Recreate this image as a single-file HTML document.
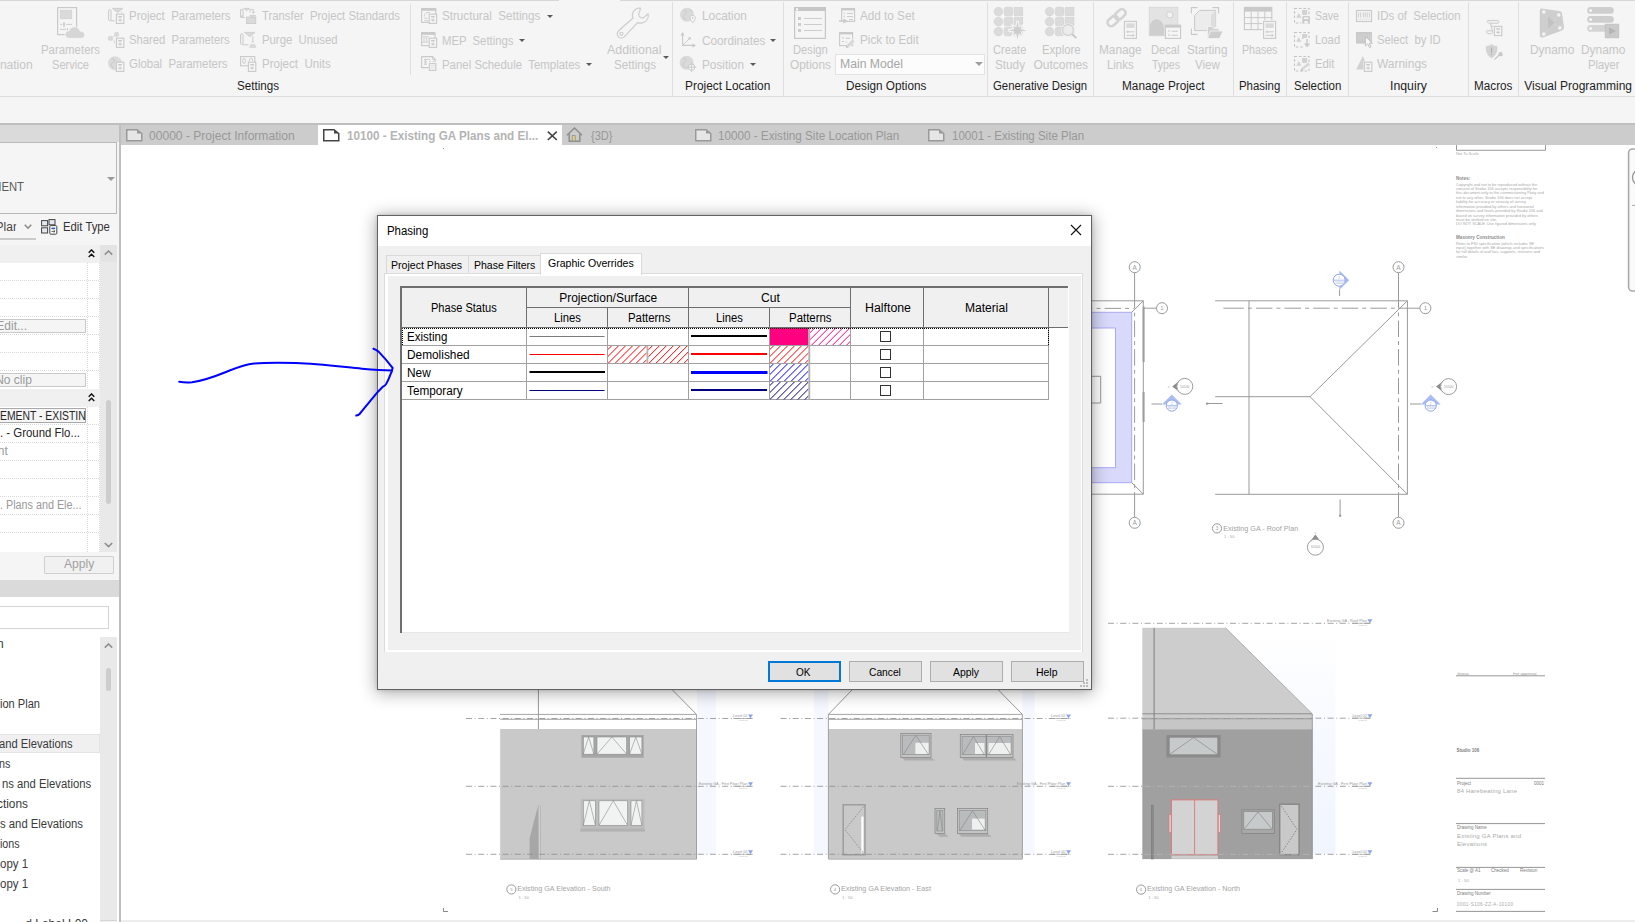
<!DOCTYPE html>
<html lang="en"><head><meta charset="utf-8"><title>Phasing</title>
<style>
html,body{margin:0;padding:0;}
body{width:1635px;height:922px;overflow:hidden;position:relative;background:#fff;
font-family:"Liberation Sans",sans-serif;}
#r{position:absolute;left:0;top:0;width:1635px;height:922px;overflow:hidden;}
#r div,#r span.t,#r svg{position:absolute;}
span.t{white-space:pre;line-height:1;display:block;}
</style></head>
<body><div id="r">
<div style="left:0px;top:0px;width:1635px;height:123px;background:#f5f5f5;"></div>
<div style="left:0px;top:0px;width:559px;height:1px;background:#d8d8d8;"></div>
<div style="left:620px;top:0px;width:1015px;height:1px;background:#d8d8d8;"></div>
<div style="left:0px;top:96px;width:1635px;height:1px;background:#dcdcdc;"></div>
<div style="left:0px;top:123px;width:1635px;height:2px;background:#bfbfbf;"></div>
<div style="left:672px;top:2px;width:1px;height:94px;background:#dfdfdf;"></div>
<div style="left:783px;top:2px;width:1px;height:94px;background:#dfdfdf;"></div>
<div style="left:987px;top:2px;width:1px;height:94px;background:#dfdfdf;"></div>
<div style="left:1093px;top:2px;width:1px;height:94px;background:#dfdfdf;"></div>
<div style="left:1233px;top:2px;width:1px;height:94px;background:#dfdfdf;"></div>
<div style="left:1286px;top:2px;width:1px;height:94px;background:#dfdfdf;"></div>
<div style="left:1348px;top:2px;width:1px;height:94px;background:#dfdfdf;"></div>
<div style="left:1468px;top:2px;width:1px;height:94px;background:#dfdfdf;"></div>
<div style="left:1518px;top:2px;width:1px;height:94px;background:#dfdfdf;"></div>
<div style="left:410px;top:4px;width:1px;height:71px;background:#dfdfdf;"></div>
<div style="left:121px;top:125px;width:1514px;height:20px;background:#cccccc;"></div>
<div style="left:318px;top:125px;width:244px;height:20px;background:#ffffff;"></div>
<div style="left:835px;top:53.5px;width:150px;height:21px;background:#fcfcfc;border:1px solid #e3e3e3;box-sizing:border-box;"></div>
<svg style="left:546.5px;top:14.7px" width="6" height="3" viewBox="0 0 6 3"><path d="M0 0H6L3.0 3Z" fill="#5a5a5a"/></svg>
<svg style="left:519.4px;top:38.7px" width="6" height="3" viewBox="0 0 6 3"><path d="M0 0H6L3.0 3Z" fill="#5a5a5a"/></svg>
<svg style="left:586.4px;top:62.7px" width="6" height="3" viewBox="0 0 6 3"><path d="M0 0H6L3.0 3Z" fill="#5a5a5a"/></svg>
<svg style="left:663.4px;top:55.8px" width="6" height="3" viewBox="0 0 6 3"><path d="M0 0H6L3.0 3Z" fill="#5a5a5a"/></svg>
<svg style="left:770.4px;top:38.7px" width="6" height="3" viewBox="0 0 6 3"><path d="M0 0H6L3.0 3Z" fill="#5a5a5a"/></svg>
<svg style="left:749.7px;top:62.7px" width="6" height="3" viewBox="0 0 6 3"><path d="M0 0H6L3.0 3Z" fill="#5a5a5a"/></svg>
<svg style="left:974.7px;top:62.0px" width="8" height="4" viewBox="0 0 8 4"><path d="M0 0H8L4.0 4Z" fill="#a0a0a0"/></svg>
<svg style="left:126px;top:129.3px" width="17" height="13" viewBox="0 0 17 13"><path d="M0.75 0.75H11L15.75 4.5V11.75H0.75Z" fill="#e6e6e6" stroke="#999" stroke-width="1.5"/><path d="M11 0.75V4.5H15.75Z" fill="#999"/></svg>
<svg style="left:322.5px;top:129.3px" width="17" height="13" viewBox="0 0 17 13"><path d="M0.75 0.75H11L15.75 4.5V11.75H0.75Z" fill="#fff" stroke="#444" stroke-width="1.5"/><path d="M11 0.75V4.5H15.75Z" fill="#444"/></svg>
<svg style="left:694.5px;top:129.3px" width="17" height="13" viewBox="0 0 17 13"><path d="M0.75 0.75H11L15.75 4.5V11.75H0.75Z" fill="#e6e6e6" stroke="#999" stroke-width="1.5"/><path d="M11 0.75V4.5H15.75Z" fill="#999"/></svg>
<svg style="left:927.5px;top:129.3px" width="17" height="13" viewBox="0 0 17 13"><path d="M0.75 0.75H11L15.75 4.5V11.75H0.75Z" fill="#e6e6e6" stroke="#999" stroke-width="1.5"/><path d="M11 0.75V4.5H15.75Z" fill="#999"/></svg>
<svg style="left:547px;top:131px" width="11" height="10" viewBox="0 0 11 10"><path d="M0.8 0.6L9.8 9M9.8 0.6L0.8 9" stroke="#444" stroke-width="1.6" fill="none"/></svg>
<svg style="left:566px;top:127px" width="17" height="15" viewBox="0 0 17 15"><path d="M1 8.2L8.5 1L16 8.2" fill="none" stroke="#8e8e8e" stroke-width="1.5"/><path d="M3.2 7V14.2H13.8V7" fill="none" stroke="#8e8e8e" stroke-width="1.5"/><rect x="6.2" y="8.6" width="3" height="5.4" fill="#e7d27a" stroke="#8e8e8e" stroke-width="0.8"/></svg>
<div style="left:0px;top:125px;width:119px;height:455px;background:#f5f5f5;"></div>
<div style="left:119px;top:125px;width:2px;height:797px;background:#bfbfbf;"></div>
<div style="left:0px;top:125px;width:119px;height:16.5px;background:#dadada;"></div>
<div style="left:-2px;top:142px;width:119px;height:72px;background:#f5f5f5;border:1px solid #b9b9b9;box-sizing:border-box;"></div>
<svg style="left:107.0px;top:177.0px" width="8" height="4" viewBox="0 0 8 4"><path d="M0 0H8L4.0 4Z" fill="#9a9a9a"/></svg>
<svg style="left:24px;top:223.5px" width="8" height="6" viewBox="0 0 8 6"><path d="M0.8 0.8L4 4.2L7.2 0.8" fill="none" stroke="#8a8a8a" stroke-width="1.6"/></svg>
<div style="left:0px;top:238px;width:36px;height:2px;background:#cbcbcb;"></div>
<svg style="left:41px;top:219px" width="17" height="16" viewBox="0 0 17 16"><rect x="0.6" y="1.6" width="6" height="5.2" fill="#e4e8f0" stroke="#444" stroke-width="1"/><rect x="8" y="0.6" width="6" height="5.2" fill="#e4e8f0" stroke="#444" stroke-width="1"/><rect x="0.6" y="8.8" width="6" height="5.2" fill="#e4e8f0" stroke="#444" stroke-width="1"/><rect x="8.8" y="6.6" width="7" height="8.6" rx="1" fill="#fff" stroke="#444" stroke-width="1"/><rect x="10.4" y="8.6" width="3.8" height="1.6" fill="#2a62c0"/><path d="M10.4 12.4H14M12.6 11.2L14 12.4L12.6 13.6" stroke="#444" stroke-width="0.8" fill="none"/></svg>
<div style="left:0px;top:245px;width:100px;height:307px;background:#ffffff;"></div>
<div style="left:0px;top:245px;width:100px;height:17.5px;background:#f0f0f0;"></div>
<div style="left:0px;top:388.5px;width:100px;height:18px;background:#f0f0f0;"></div>
<div style="left:0px;top:280px;width:100px;height:1px;background:none;background:repeating-linear-gradient(90deg,#d9d9d9 0 1px,transparent 1px 2px);"></div>
<div style="left:0px;top:298px;width:100px;height:1px;background:none;background:repeating-linear-gradient(90deg,#d9d9d9 0 1px,transparent 1px 2px);"></div>
<div style="left:0px;top:316px;width:100px;height:1px;background:none;background:repeating-linear-gradient(90deg,#d9d9d9 0 1px,transparent 1px 2px);"></div>
<div style="left:0px;top:334px;width:100px;height:1px;background:none;background:repeating-linear-gradient(90deg,#d9d9d9 0 1px,transparent 1px 2px);"></div>
<div style="left:0px;top:352px;width:100px;height:1px;background:none;background:repeating-linear-gradient(90deg,#d9d9d9 0 1px,transparent 1px 2px);"></div>
<div style="left:0px;top:370px;width:100px;height:1px;background:none;background:repeating-linear-gradient(90deg,#d9d9d9 0 1px,transparent 1px 2px);"></div>
<div style="left:0px;top:424px;width:100px;height:1px;background:none;background:repeating-linear-gradient(90deg,#d9d9d9 0 1px,transparent 1px 2px);"></div>
<div style="left:0px;top:442px;width:100px;height:1px;background:none;background:repeating-linear-gradient(90deg,#d9d9d9 0 1px,transparent 1px 2px);"></div>
<div style="left:0px;top:460px;width:100px;height:1px;background:none;background:repeating-linear-gradient(90deg,#d9d9d9 0 1px,transparent 1px 2px);"></div>
<div style="left:0px;top:478px;width:100px;height:1px;background:none;background:repeating-linear-gradient(90deg,#d9d9d9 0 1px,transparent 1px 2px);"></div>
<div style="left:0px;top:496px;width:100px;height:1px;background:none;background:repeating-linear-gradient(90deg,#d9d9d9 0 1px,transparent 1px 2px);"></div>
<div style="left:0px;top:514px;width:100px;height:1px;background:none;background:repeating-linear-gradient(90deg,#d9d9d9 0 1px,transparent 1px 2px);"></div>
<div style="left:0px;top:532px;width:100px;height:1px;background:none;background:repeating-linear-gradient(90deg,#d9d9d9 0 1px,transparent 1px 2px);"></div>
<div style="left:87px;top:263px;width:1px;height:125px;background:none;background:repeating-linear-gradient(180deg,#d9d9d9 0 1px,transparent 1px 2px);"></div>
<div style="left:87px;top:407px;width:1px;height:145px;background:none;background:repeating-linear-gradient(180deg,#d9d9d9 0 1px,transparent 1px 2px);"></div>
<div style="left:99px;top:263px;width:1px;height:125px;background:none;background:repeating-linear-gradient(180deg,#d9d9d9 0 1px,transparent 1px 2px);"></div>
<div style="left:99px;top:407px;width:1px;height:145px;background:none;background:repeating-linear-gradient(180deg,#d9d9d9 0 1px,transparent 1px 2px);"></div>
<svg style="left:87.5px;top:249px" width="7" height="9" viewBox="0 0 7 9"><path d="M0.7 3.7L3.5 0.9L6.3 3.7M0.7 8L3.5 5.2L6.3 8" fill="none" stroke="#111" stroke-width="1.4"/></svg>
<svg style="left:87.5px;top:393px" width="7" height="9" viewBox="0 0 7 9"><path d="M0.7 3.7L3.5 0.9L6.3 3.7M0.7 8L3.5 5.2L6.3 8" fill="none" stroke="#111" stroke-width="1.4"/></svg>
<div style="left:-2px;top:318.5px;width:88px;height:14px;background:#f5f5f5;border:1px solid #c9c9c9;box-sizing:border-box;"></div>
<div style="left:-2px;top:372.5px;width:88px;height:14px;background:#f5f5f5;border:1px solid #c9c9c9;box-sizing:border-box;"></div>
<div style="left:-2px;top:408px;width:88px;height:15px;background:#f5f5f5;border:1px solid #a9a9a9;box-sizing:border-box;"></div>
<div style="left:100px;top:245px;width:17px;height:307px;background:#e9e9e9;"></div>
<div style="left:100px;top:245px;width:17px;height:16.5px;background:#e3e3e3;"></div>
<svg style="left:104px;top:250px" width="9" height="6" viewBox="0 0 9 6"><path d="M0.8 4.6L4.5 1L8.2 4.6" fill="none" stroke="#8e8e8e" stroke-width="1.5"/></svg>
<svg style="left:104px;top:542px" width="9" height="6" viewBox="0 0 9 6"><path d="M0.8 1L4.5 4.6L8.2 1" fill="none" stroke="#8c8c8c" stroke-width="1.5"/></svg>
<div style="left:106px;top:399.5px;width:5px;height:104px;background:#cdcdcd;border-radius:2.5px;"></div>
<div style="left:44px;top:555.5px;width:70px;height:18px;background:#f1f1f1;border:1px solid #cfcfcf;box-sizing:border-box;border-radius:1px;"></div>
<div style="left:0px;top:580px;width:119px;height:16.5px;background:#dadada;"></div>
<div style="left:0px;top:596.5px;width:119px;height:325.5px;background:#ffffff;"></div>
<div style="left:-2px;top:605.5px;width:111px;height:23px;background:#fff;border:1px solid #d4d4d4;box-sizing:border-box;"></div>
<div style="left:100px;top:637px;width:17px;height:282.5px;background:#e9e9e9;"></div>
<svg style="left:104px;top:642.5px" width="9" height="6" viewBox="0 0 9 6"><path d="M0.8 4.6L4.5 1L8.2 4.6" fill="none" stroke="#8c8c8c" stroke-width="1.5"/></svg>
<div style="left:106px;top:667.5px;width:5px;height:23px;background:#cdcdcd;border-radius:2.5px;"></div>
<div style="left:-2px;top:733.5px;width:102px;height:19.5px;background:#f0f0f0;border:1px solid #e4e4e4;box-sizing:border-box;"></div>
<div style="left:121px;top:919.5px;width:1514px;height:3px;background:#ededed;"></div>
<div style="left:100px;top:919.5px;width:17px;height:1px;background:#d6d6d6;"></div>
<div style="left:100px;top:920.5px;width:17px;height:2px;background:#f0f0f0;"></div>
<!-- ribbon icons -->
<svg style="left:0;top:0" width="1635" height="96" viewBox="0 0 1635 96" fill="none" stroke="#c9c9c9" stroke-width="1"><rect x="57.6" y="7.6" width="19" height="27" fill="none" stroke="#c9c9c9" stroke-width="1.2"/><rect x="60.2" y="10.2" width="11.6" height="8.6" fill="#dadada" stroke="#cfcfcf" stroke-width="0.6"/><path d="M60 24.4H62.2M66 24.4H72M60 29.4H66" stroke="#c9c9c9" stroke-width="0.9"/><rect x="63.2" y="22.2" width="1.6" height="4.6" fill="#c9c9c9" stroke="none"/><path d="M67.4 28V30.4" stroke="#c9c9c9" stroke-width="1"/><path d="M69.6 38.4C66.6 38.4 65 36.6 65 34.6C65 32.4 66.8 30.8 69 30.8C69.6 28.4 71.8 26.8 74.4 26.8C77.2 26.8 79.4 28.6 80 31C82.8 31 84.8 32.6 84.8 34.8C84.8 36.8 83.2 38.4 80.6 38.4Z" fill="#d6d6d6" stroke="#f5f5f5" stroke-width="1"/><path d="M108.6 10.4C108.6 9.4 111 9.4 111 10.4V19.6C111 21 108.6 21 108.6 19.6ZM111 20.8H114.6" stroke="#c9c9c9"/><path d="M112.4 8.4H122.8L117.6 12.6ZM121.6 11.6V12.8" fill="#dadada" stroke="#c9c9c9" stroke-width="0.8"/><rect x="116.4" y="14.2" width="7.4" height="9.2" fill="#f5f5f5" stroke="#c9c9c9" stroke-width="1.1"/><rect x="118.30000000000001" y="16.0" width="3.6000000000000005" height="1.5" fill="#c9c9c9" stroke="none"/><path d="M118.2 20.1H122.00000000000001M120.10000000000001 18.5V21.7" stroke="#c9c9c9" stroke-width="1"/><circle cx="110.4" cy="38.4" r="2.2" fill="#dadada" stroke="#d0d0d0" stroke-width="0.6"/><circle cx="116.6" cy="34.4" r="2.2" fill="#dadada" stroke="#d0d0d0" stroke-width="0.6"/><path d="M112.2 37.4L114.8 35.6M112.4 39.6C114 40.4 114.6 41.4 114.6 43.4" stroke="#d2d2d2" stroke-width="0.9"/><rect x="116.4" y="38.2" width="7.4" height="9.2" fill="#f5f5f5" stroke="#c9c9c9" stroke-width="1.1"/><rect x="118.30000000000001" y="40.0" width="3.6000000000000005" height="1.5" fill="#c9c9c9" stroke="none"/><path d="M118.2 44.1H122.00000000000001M120.10000000000001 42.5V45.7" stroke="#c9c9c9" stroke-width="1"/><circle cx="115" cy="63.2" r="7" fill="#dcdcdc" stroke="none"/><path d="M111.4 59.6C113 58.4 115 59 114.4 61C113.6 63 111.6 62.4 111 64.6C111.4 66.6 113 66.4 113.6 68.6" stroke="#cdcdcd" stroke-width="1.2"/><rect x="116.4" y="62.2" width="7.4" height="9.2" fill="#f5f5f5" stroke="#c9c9c9" stroke-width="1.1"/><rect x="118.30000000000001" y="64.0" width="3.6000000000000005" height="1.5" fill="#c9c9c9" stroke="none"/><path d="M118.2 68.10000000000001H122.00000000000001M120.10000000000001 66.5V69.7" stroke="#c9c9c9" stroke-width="1"/><path d="M240.6 9.6H243V16.2H240.6ZM240.6 16.2V17.4H245" stroke="#c9c9c9"/><path d="M243.6 8.4H249.6L246.6 10.8Z" fill="#dadada" stroke="#c9c9c9" stroke-width="0.7"/><path d="M250 9.6H253.4V13M251.8 11.6L253.4 13.4L255 11.6M250 9.6V12.4" stroke="#c9c9c9" stroke-width="0.9"/><rect x="246.6" y="17" width="9.2" height="6.6" fill="#dadada" stroke="#c9c9c9" stroke-width="0.8"/><path d="M249.8 15.4H255.6L252.7 18Z" fill="#dadada" stroke="#c9c9c9" stroke-width="0.7"/><path d="M240.6 34.6C240.6 33.4 243 33.4 243 34.6V43.4C243 44.8 240.6 44.8 240.6 43.4ZM243 44.8H248.6" stroke="#c9c9c9"/><path d="M244.6 32.4H255L249.8 36.8Z" fill="#dadada" stroke="#c9c9c9" stroke-width="0.8"/><path d="M252.8 36V41.6M251.6 41.8H254" stroke="#c9c9c9" stroke-width="0.9"/><path d="M250.8 44.4H254.8L255.8 47.4H249.6Z" fill="#dadada" stroke="#d0d0d0" stroke-width="0.6"/><rect x="240.6" y="56.6" width="14.2" height="9.2" fill="none" stroke="#c9c9c9" stroke-width="1.1"/><rect x="242.8" y="58.6" width="2.6" height="4.8" rx="1.2" fill="none" stroke="#c9c9c9" stroke-width="0.9"/><path d="M249.4 61.4V59.8C249.4 58 252.6 58 252.6 59.8V61.4" stroke="#c9c9c9" stroke-width="0.9"/><rect x="248.4" y="62.2" width="7.4" height="9.2" fill="#f5f5f5" stroke="#c9c9c9" stroke-width="1.1"/><rect x="250.3" y="64.0" width="3.6000000000000005" height="1.5" fill="#c9c9c9" stroke="none"/><path d="M250.20000000000002 68.10000000000001H254.0M252.1 66.5V69.7" stroke="#c9c9c9" stroke-width="1"/><rect x="421.6" y="8.6" width="14.2" height="13.8" fill="none" stroke="#c9c9c9" stroke-width="1.1"/><rect x="421.6" y="8.6" width="14.2" height="2.2" fill="#c9c9c9" stroke="none"/><path d="M430 12.6H426.6L424.4 15V16.4M424.2 18.2H427.6M424.4 20.6H428" stroke="#c9c9c9" stroke-width="0.9"/><rect x="429.2" y="14.2" width="7.4" height="9.2" fill="#f5f5f5" stroke="#c9c9c9" stroke-width="1.1"/><rect x="431.09999999999997" y="16.0" width="3.6000000000000005" height="1.5" fill="#c9c9c9" stroke="none"/><path d="M431.0 20.1H434.79999999999995M432.9 18.5V21.7" stroke="#c9c9c9" stroke-width="1"/><rect x="421.6" y="32.6" width="13.4" height="13" fill="none" stroke="#c9c9c9" stroke-width="1.1"/><rect x="421.6" y="32.6" width="13.4" height="2.2" fill="#c9c9c9" stroke="none"/><path d="M422 36.8H428.6M422 42.2H428.6M424 37.4V41.6M426.6 37.4V41.6" stroke="#c9c9c9" stroke-width="0.9"/><rect x="429.2" y="38.2" width="7.4" height="9.2" fill="#f5f5f5" stroke="#c9c9c9" stroke-width="1.1"/><rect x="431.09999999999997" y="40.0" width="3.6000000000000005" height="1.5" fill="#c9c9c9" stroke="none"/><path d="M431.0 44.1H434.79999999999995M432.9 42.5V45.7" stroke="#c9c9c9" stroke-width="1"/><path d="M421.6 56.6H432.6L435.2 59.2V62M421.6 56.6V67.6H428.6" stroke="#c9c9c9" stroke-width="1.1"/><path d="M432.4 56.8V59.4H435" stroke="#c9c9c9" stroke-width="0.8"/><path d="M424 59.4H430M424 61.8H427M424 64.2H427M425.4 59.6V64.4M429 61.8L431 60.8M432.6 61.8L434.4 60.8" stroke="#c9c9c9" stroke-width="0.9"/><rect x="429.4" y="63.6" width="6.4" height="6.8" fill="#f5f5f5" stroke="#c9c9c9" stroke-width="1.1"/><path d="M431.4 65.8H432.4M433.4 65.8H434.2M431.4 68H432.4M433.4 68H434.2" stroke="#c9c9c9" stroke-width="1"/><path d="M640.6 8.2C637.4 7.6 633.4 9.6 632.6 13.4C632.2 15 632.4 16.6 633 18L618.6 30.8C616.8 32.6 616.8 35.2 618.4 36.8C620 38.4 622.6 38.4 624.2 36.8L637.6 22.6C639.2 23.2 641.2 23.2 643 22.6C646.8 21.4 648.8 17.8 648.2 13.8L643.6 17.6C641.8 18.4 639.4 17.2 638.8 15.4C638.4 14 638.6 13 639.4 12.2Z" stroke="#cdcdcd" stroke-width="1.2" stroke-linejoin="round"/><circle cx="621.4" cy="33.8" r="1.6" stroke="#cdcdcd" stroke-width="1.1"/><circle cx="687" cy="14.8" r="7" fill="#dadada" stroke="none"/><path d="M683.4 11.2C685 10 687 10.6 686.4 12.6C685.6 14.6 683.6 14 683 16.2C683.4 18.2 685 18 685.6 20.2M689.4 9.4C690.6 10.4 691.6 10.6 692.6 12" stroke="#cfcfcf" stroke-width="1.2"/><path d="M692.8 22.8C690.6 20.2 690.2 19 690.2 17.8C690.2 16.2 691.4 15.2 692.8 15.2C694.2 15.2 695.4 16.2 695.4 17.8C695.4 19 695 20.2 692.8 22.8Z" fill="#f5f5f5" stroke="#c9c9c9" stroke-width="0.9"/><circle cx="692.8" cy="17.8" r="0.9" fill="#c9c9c9" stroke="none"/><path d="M682.6 34V45.4H694" stroke="#c9c9c9" stroke-width="1.1"/><path d="M682.6 32L684.6 35.6H680.6ZM696 45.4L692.4 43.4V47.4Z" fill="#c9c9c9" stroke="none"/><path d="M683 45L689.8 38.2" stroke="#c9c9c9" stroke-width="0.9"/><path d="M691 37L690.2 40.2L687.8 37.8Z" fill="#c9c9c9" stroke="none"/><circle cx="686.6" cy="62.8" r="7" fill="#dadada" stroke="none"/><path d="M683 59.2C684.6 58 686.6 58.6 686 60.6C685.2 62.6 683.2 62 682.6 64.2C683 66.2 684.6 66 685.2 68.2" stroke="#cfcfcf" stroke-width="1.2"/><circle cx="691.6" cy="67.2" r="3.2" fill="#f5f5f5" stroke="#c9c9c9" stroke-width="1"/><path d="M691.6 62.4V72M686.8 67.2H696.4" stroke="#c9c9c9" stroke-width="0.9"/><rect x="794.6" y="7.6" width="30.8" height="30.8" fill="none" stroke="#c6c6c6" stroke-width="1.2"/><rect x="794.6" y="7.6" width="30.8" height="3.4" fill="#c6c6c6" stroke="none"/><rect x="796" y="8.4" width="2" height="2" fill="#fff" stroke="none"/><rect x="798" y="17" width="3" height="3" fill="#cdcdcd" stroke="none"/><path d="M804 18.5H822" stroke="#cdcdcd" stroke-width="1"/><rect x="798" y="23" width="3" height="3" fill="#cdcdcd" stroke="none"/><path d="M804 24.5H822" stroke="#cdcdcd" stroke-width="1"/><rect x="798" y="29" width="3" height="3" fill="#cdcdcd" stroke="none"/><path d="M804 30.5H822" stroke="#cdcdcd" stroke-width="1"/><rect x="841.6" y="8.6" width="13" height="12.8" fill="#f5f5f5" stroke="#c9c9c9" stroke-width="1.1"/><rect x="841.6" y="8.6" width="13" height="1.8" fill="#c9c9c9" stroke="none"/><path d="M843.4 13H845M847 13.4H853M843.4 16.2H845M847 16.6H853M849 19.6H853" stroke="#c9c9c9" stroke-width="1"/><path d="M839 21H844.4" stroke="#cdcdcd" stroke-width="1.6"/><path d="M843.4 18.2L847.8 21L843.4 23.8Z" fill="#cdcdcd" stroke="none"/><rect x="839.6" y="32.6" width="13" height="13" fill="none" stroke="#c9c9c9" stroke-width="1.1"/><rect x="839.6" y="32.6" width="13" height="1.8" fill="#c9c9c9" stroke="none"/><path d="M842 37.8H844M845.6 38.2H850M842 41.6H844M845.6 42H847" stroke="#c9c9c9" stroke-width="1"/><path d="M852.6 39L855 41.4L848.8 47.4L846.4 45Z" fill="#d6d6d6" stroke="#f5f5f5" stroke-width="0.8"/><path d="M846.4 45L846 48L848.8 47.4Z" fill="#c4c4c4" stroke="none"/><circle cx="998.4" cy="11.600000000000001" r="4.3" fill="#dbdbdb" stroke="#d2d2d2" stroke-width="0.6"/><rect x="1004.2" y="7.2" width="8.6" height="8.6" rx="1.8" fill="#dbdbdb" stroke="#d2d2d2" stroke-width="0.6"/><rect x="1014.2" y="7.2" width="8.6" height="8.6" fill="#dbdbdb" stroke="#d2d2d2" stroke-width="0.6"/><circle cx="998.4" cy="21.6" r="4.3" fill="#dbdbdb" stroke="#d2d2d2" stroke-width="0.6"/><rect x="1004.2" y="17.2" width="8.6" height="8.6" rx="1.8" fill="#dbdbdb" stroke="#d2d2d2" stroke-width="0.6"/><rect x="1014.2" y="17.2" width="8.6" height="8.6" fill="#dbdbdb" stroke="#d2d2d2" stroke-width="0.6"/><circle cx="998.4" cy="31.6" r="4.3" fill="#dbdbdb" stroke="#d2d2d2" stroke-width="0.6"/><rect x="1004.2" y="27.2" width="8.6" height="8.6" rx="1.8" fill="#dbdbdb" stroke="#d2d2d2" stroke-width="0.6"/><rect x="1014.2" y="27.2" width="8.6" height="8.6" fill="#dbdbdb" stroke="#d2d2d2" stroke-width="0.6"/><path d="M1017.5 21.0L1018.7 27.4L1022.0 25.9L1020.5 29.2L1026.9 30.4L1020.5 31.6L1022.0 34.9L1018.7 33.4L1017.5 39.8L1016.3 33.4L1013.0 34.9L1014.5 31.6L1008.1 30.4L1014.5 29.2L1013.0 25.9L1016.3 27.4Z" fill="#cdcdcd" stroke="#f5f5f5" stroke-width="2.2" paint-order="stroke"/><circle cx="1049.6000000000001" cy="11.600000000000001" r="4.3" fill="#dbdbdb" stroke="#d2d2d2" stroke-width="0.6"/><rect x="1055.4" y="7.2" width="8.6" height="8.6" rx="1.8" fill="#dbdbdb" stroke="#d2d2d2" stroke-width="0.6"/><rect x="1065.4" y="7.2" width="8.6" height="8.6" fill="#dbdbdb" stroke="#d2d2d2" stroke-width="0.6"/><circle cx="1049.6000000000001" cy="21.6" r="4.3" fill="#dbdbdb" stroke="#d2d2d2" stroke-width="0.6"/><rect x="1055.4" y="17.2" width="8.6" height="8.6" rx="1.8" fill="#dbdbdb" stroke="#d2d2d2" stroke-width="0.6"/><rect x="1065.4" y="17.2" width="8.6" height="8.6" fill="#dbdbdb" stroke="#d2d2d2" stroke-width="0.6"/><circle cx="1049.6000000000001" cy="31.6" r="4.3" fill="#dbdbdb" stroke="#d2d2d2" stroke-width="0.6"/><rect x="1055.4" y="27.2" width="8.6" height="8.6" rx="1.8" fill="#dbdbdb" stroke="#d2d2d2" stroke-width="0.6"/><rect x="1065.4" y="27.2" width="8.6" height="8.6" fill="#dbdbdb" stroke="#d2d2d2" stroke-width="0.6"/><circle cx="1068" cy="30" r="6.6" fill="#f5f5f5" stroke="none"/><circle cx="1068" cy="30" r="5.4" fill="#ececec" stroke="#cdcdcd" stroke-width="1.1"/><path d="M1072.2 34.2L1076.4 38.2" stroke="#c6c6c6" stroke-width="1.8"/><g transform="rotate(-42 1116.7 17.6)" stroke="#d3d3d3" stroke-width="2.5" fill="none"><rect x="1105.6" y="13.9" width="12" height="7.4" rx="3.7"/><rect x="1115.4" y="13.9" width="12" height="7.4" rx="3.7"/></g><rect x="1123.2" y="20.2" width="14.4" height="19.4" fill="#f5f5f5" stroke="none"/><rect x="1124.4" y="21.4" width="12" height="17" fill="#f5f5f5" stroke="#c9c9c9" stroke-width="1.1"/><rect x="1126.3000000000002" y="23.299999999999997" width="8.2" height="4.6" fill="#dadada" stroke="none"/><path d="M1126.4 31.799999999999997H1134.4M1127.8000000000002 30.4V33.2M1126.4 35.4H1134.4M1133.0 34.0V36.8" stroke="#c9c9c9" stroke-width="0.9"/><rect x="1149.2" y="7.2" width="28.6" height="28.6" fill="#e3e3e3" stroke="#d6d6d6" stroke-width="0.8"/><path d="M1149.6 35.4V26C1151 21.4 1153.6 19.2 1156.6 19.2C1160.4 19.2 1163.2 23 1164 28V35.4Z" fill="#cecece" stroke="none"/><circle cx="1169.8" cy="14.8" r="3.2" fill="#f2f2f2" stroke="#d0d0d0" stroke-width="1"/><rect x="1165.4" y="25.2" width="15.2" height="13.2" fill="#f5f5f5" stroke="#c9c9c9" stroke-width="1.1"/><rect x="1165.4" y="25.2" width="15.2" height="2.4" fill="#c9c9c9" stroke="none"/><path d="M1168 31H1170M1171.6 31.2H1178M1168 35H1170M1171.6 35.2H1178" stroke="#c9c9c9" stroke-width="1.1"/><path d="M1191.4 13.4V7.6H1197.6M1212.4 7.6H1218.6V13.4M1191.4 28.6V34.4H1197.6" stroke="#c9c9c9" stroke-width="1.1"/><path d="M1194.6 15.4L1199.6 10.4H1215.6V26L1211 30.6H1194.6Z" fill="#ececec" stroke="#c9c9c9" stroke-width="1"/><path d="M1211 15L1215.6 10.4V26L1211 30.6Z" fill="#dedede" stroke="none"/><path d="M1207.4 38.4V26.4H1212.4L1213.6 28.4H1219V30.4" fill="#d2d2d2" stroke="#f5f5f5" stroke-width="0.8"/><path d="M1207.4 38.6L1210.6 31H1223L1219.6 38.6Z" fill="#cdcdcd" stroke="#f5f5f5" stroke-width="0.8"/><rect x="1244.4" y="7.4" width="27.4" height="22.2" fill="none" stroke="#c9c9c9" stroke-width="1.1"/><rect x="1244.4" y="7.4" width="27.4" height="4.2" fill="#c9c9c9" stroke="none"/><path d="M1244.4 17.6H1271.8M1244.4 23.6H1271.8M1251.2 11.6V29.6M1258 11.6V29.6M1264.8 11.6V29.6" stroke="#c9c9c9" stroke-width="1"/><rect x="1262.4" y="20.2" width="14.4" height="19.4" fill="#f5f5f5" stroke="none"/><rect x="1263.6" y="21.4" width="12" height="17" fill="#f5f5f5" stroke="#c9c9c9" stroke-width="1.1"/><rect x="1265.5" y="23.299999999999997" width="8.2" height="4.6" fill="#dadada" stroke="none"/><path d="M1265.6 31.799999999999997H1273.6M1267.0 30.4V33.2M1265.6 35.4H1273.6M1272.1999999999998 34.0V36.8" stroke="#c9c9c9" stroke-width="0.9"/><rect x="1294.5" y="8.5" width="14.5" height="14.5" fill="none" stroke="#c4c4c4" stroke-width="1.1" stroke-dasharray="2.6 1.8"/><path d="M1296.6 17.6L1298.8 13.6L1301 17.6Z" fill="#d2d2d2" stroke="#d0d0d0" stroke-width="0.5"/><rect x="1302.4" y="10.4" width="4.4" height="4.2" fill="#d2d2d2" stroke="#cacaca" stroke-width="0.6"/><rect x="1301.4" y="15.2" width="9.4" height="9.4" fill="#f5f5f5" stroke="none"/><rect x="1302.4" y="16.2" width="7.4" height="7.4" fill="#c8c8c8" stroke="none"/><rect x="1303.8" y="17.4" width="4.6" height="1.8" fill="#f5f5f5" stroke="none"/><rect x="1304.4" y="21" width="3.4" height="2.6" fill="#f5f5f5" stroke="none"/><rect x="1294.5" y="32.5" width="14.5" height="14.5" fill="none" stroke="#c4c4c4" stroke-width="1.1" stroke-dasharray="2.6 1.8"/><path d="M1296.6 41.6L1298.8 37.6L1301 41.6Z" fill="#d2d2d2" stroke="#d0d0d0" stroke-width="0.5"/><rect x="1302.4" y="34.4" width="4.4" height="4.2" fill="#d2d2d2" stroke="#cacaca" stroke-width="0.6"/><rect x="1303.6" y="38" width="6" height="10" fill="#f5f5f5" stroke="none"/><path d="M1307 39V45.6" stroke="#c8c8c8" stroke-width="1.4"/><path d="M1304 43.6L1307 47.4L1310 43.6Z" fill="#c8c8c8" stroke="none"/><rect x="1294.5" y="56.5" width="14.5" height="14.5" fill="none" stroke="#c4c4c4" stroke-width="1.1" stroke-dasharray="2.6 1.8"/><path d="M1296.6 65.6L1298.8 61.6L1301 65.6Z" fill="#d2d2d2" stroke="#d0d0d0" stroke-width="0.5"/><rect x="1302.4" y="58.4" width="4.4" height="4.2" fill="#d2d2d2" stroke="#cacaca" stroke-width="0.6"/><path d="M1301 68L1308.4 62L1310.4 64.4L1303 70.4Z" fill="#d6d6d6" stroke="#f5f5f5" stroke-width="0.9"/><path d="M1301 68L1300.8 71.6L1303.6 70.4Z" fill="#c4c4c4" stroke="none"/><rect x="1356.5" y="10.5" width="15" height="11" fill="none" stroke="#c9c9c9" stroke-width="1.1"/><path d="M1358.6 12.4V17.4M1360.6 12.4V17.4M1363.4 12.4V17.4M1365.2 12.4V17.4M1367.2 12.4V17.4M1369.4 12.4V17.4" stroke="#c9c9c9" stroke-width="0.9"/><path d="M1358.4 19.2H1370" stroke="#c9c9c9" stroke-width="0.9" stroke-dasharray="1 1"/><rect x="1356" y="32" width="16" height="11.6" fill="#cacaca" stroke="none"/><path d="M1358.6 34V41M1361 34V41M1363.6 34V41M1366 34V41M1368.4 34V41M1370.4 34V41" stroke="#d6d6d6" stroke-width="0.8"/><path d="M1365.4 36.6V46L1367.8 43.8L1369.6 47.6L1371 46.9L1369.3 43.2H1372.4Z" fill="#f8f8f8" stroke="#bdbdbd" stroke-width="0.9" stroke-linejoin="round"/><path d="M1362.8 56L1368.8 69.4H1356.2Z" fill="#d2d2d2" stroke="none"/><rect x="1363.4" y="61" width="9.4" height="11.4" fill="#f5f5f5" stroke="none"/><rect x="1364.4" y="62.2" width="7.4" height="9.2" fill="#f5f5f5" stroke="#c9c9c9" stroke-width="1.1"/><rect x="1366.3000000000002" y="64.0" width="3.6000000000000005" height="1.5" fill="#c9c9c9" stroke="none"/><path d="M1366.2 68.10000000000001H1370.0000000000002M1368.1000000000001 66.5V69.7" stroke="#c9c9c9" stroke-width="1"/><path d="M1487.6 20.6H1497.8C1499.2 20.6 1499.2 23.2 1497.8 23.2H1490.4L1492.8 32.4C1493 34.2 1488 34.2 1486.6 32.6C1486 31.6 1486.4 30.8 1487.2 30.8H1492.4M1490.4 23.2C1488.8 23.2 1486.4 22.6 1487.6 20.6M1491 26H1493.4" stroke="#c9c9c9" stroke-width="1"/><rect x="1494.4" y="26.4" width="7.4" height="9.2" fill="#f5f5f5" stroke="#c9c9c9" stroke-width="1.1"/><rect x="1496.3000000000002" y="28.2" width="3.6000000000000005" height="1.5" fill="#c9c9c9" stroke="none"/><path d="M1496.2 32.3H1500.0000000000002M1498.1000000000001 30.7V33.9" stroke="#c9c9c9" stroke-width="1"/><path d="M1491.6 44.4C1493.4 45.8 1495.4 46.4 1497 46.4C1497.4 51.6 1495.6 55.6 1491.6 57.8C1487.6 55.6 1485.8 51.6 1486.2 46.4C1487.8 46.4 1489.8 45.8 1491.6 44.4Z" fill="#d4d4d4" stroke="#cdcdcd" stroke-width="0.6"/><path d="M1491.6 47.6V52.6M1491.6 53.8V55" stroke="#a8a8a8" stroke-width="1"/><path d="M1494.4 59.6L1499 55.2M1499 55.2C1498.6 53.6 1499.8 52.4 1501.4 52.6L1500.2 54L1500.8 54.8L1502.2 54.4C1502 55.8 1500.6 56.2 1499 55.2" stroke="#c6c6c6" stroke-width="1.2"/><path d="M1541.4 8.6C1540.4 8.8 1539.8 9.4 1539.8 10.6V35C1539.8 37 1541.2 38 1543 37.4L1562 30.4C1563.6 29.8 1564.2 28.6 1564 27L1562 13.6C1561.8 12 1560.8 11.2 1559.4 11Z" fill="#cecece" stroke="none"/><path d="M1541.4 8.6L1552 24L1559.4 11M1552 24L1543 37.4M1552 24L1564 27" stroke="#d6d6d6" stroke-width="0.8"/><path d="M1548 16.6L1554.4 22.6L1548 28.8Z" fill="#c2c2c2" stroke="none"/><circle cx="1543.8" cy="12" r="1.7" fill="#f5f5f5" stroke="none"/><circle cx="1558.8" cy="15" r="1.7" fill="#f5f5f5" stroke="none"/><circle cx="1559.8" cy="28" r="1.7" fill="#f5f5f5" stroke="none"/><circle cx="1543.8" cy="34" r="1.7" fill="#f5f5f5" stroke="none"/><rect x="1587.2" y="7" width="26.6" height="6.8" rx="3.4" fill="#cecece" stroke="none"/><rect x="1587.2" y="16" width="26.6" height="6.8" rx="3.4" fill="#cecece" stroke="none"/><rect x="1587.2" y="25" width="20" height="6.8" rx="3.4" fill="#d4d4d4" stroke="none"/><circle cx="1590.6" cy="10.4" r="1.5" fill="#f5f5f5" stroke="none"/><circle cx="1590.6" cy="19.4" r="1.5" fill="#f5f5f5" stroke="none"/><circle cx="1590.6" cy="28.4" r="1.5" fill="#f5f5f5" stroke="none"/><rect x="1605.2" y="24.2" width="13.6" height="13.6" fill="#cacaca" stroke="#c0c0c0" stroke-width="0.8"/><path d="M1609 27.4L1616 31L1609 34.6Z" fill="#b4b4b4" stroke="none"/></svg>
<!-- drawing -->
<svg style="left:121px;top:145px" width="1514" height="774" viewBox="121 145 1514 774" fill="none" stroke="#9a9a9a" stroke-width="1" font-family="Liberation Sans, sans-serif"><path d="M443.5 908V911.5H448" stroke="#888"/><path d="M1437.5 908V911.5H1432.5" stroke="#888"/><rect x="443" y="148" width="1" height="1" fill="#999" stroke="none"/><rect x="1436" y="147" width="1" height="1" fill="#999" stroke="none"/><rect x="1085" y="312.3" width="46.7" height="170.4" fill="#d9d9fb" stroke="none"/><rect x="1085" y="328" width="30.5" height="139.7" fill="#fff" stroke="none"/><path d="M1085 312.3H1131.7V482.7H1085" stroke="#a9a9f4"/><path d="M1085 328H1115.5V467.7H1085" stroke="#a9a9f4"/><path d="M1085 300.8H1143.3V494.2H1085" stroke="#9a9a9a"/><path d="M1131.7 312.3L1143.3 300.8M1131.7 482.7L1143.3 494.2" stroke="#9a9a9a"/><path d="M1085 376.3H1100.7V403H1085" stroke="#9a9a9a"/><path d="M1143.6 306.5V362M1143.6 392V422" stroke="#9d9d9d" stroke-width="2"/><path d="M1085 308.4H1134" stroke="#9a9a9a" stroke-dasharray="16.4 4.2 3.8 4.2" stroke-dashoffset="9"/><path d="M1134.6 272.7V292M1134.6 496V517.3" stroke="#9a9a9a"/><path d="M1134.6 292V496" stroke="#9a9a9a" stroke-dasharray="16.4 4.2 3.8 4.2"/><circle cx="1134.7" cy="267.2" r="5.5" stroke="#9a9a9a" fill="#fff"/><circle cx="1134.7" cy="522.8" r="5.5" stroke="#9a9a9a" fill="#fff"/><text x="1134.7" y="269.6" font-size="6.5" fill="#9c9c9c" stroke="none" text-anchor="middle">A</text><text x="1134.7" y="525.2" font-size="6.5" fill="#9c9c9c" stroke="none" text-anchor="middle">A</text><path d="M1143.5 308.2H1156.5" stroke="#9a9a9a"/><circle cx="1162" cy="308.2" r="5.5" stroke="#9a9a9a" fill="#fff"/><text x="1162" y="310.4" font-size="6" fill="#9c9c9c" stroke="none" text-anchor="middle">1</text><path d="M1172.2 386.4L1179.8 380.59999999999997L1179.8 392.2Z" fill="#8c8c8c" stroke="none"/><text x="1167.8" y="387.59999999999997" font-size="3" fill="#aaa" stroke="none">x</text><circle cx="1184.8" cy="386.4" r="8" stroke="#9c9c9c" fill="#fff"/><text x="1184.8" y="387.59999999999997" font-size="3.4" fill="#999" stroke="none" text-anchor="middle">10100</text><path d="M1151.5 404H1162" stroke="#9a9a9a"/><path d="M1171.8 394.6L1181.8 404.6H1161.8Z" fill="#a9bdf2" stroke="none"/><circle cx="1171.8" cy="405.6" r="5.6" stroke="#8fa6e6" fill="#fff"/><path d="M1166.3999999999999 405.6H1177.2" stroke="#8fa6e6" stroke-width="0.7"/><text x="1171.8" y="404.6" font-size="3" fill="#8fa6e6" stroke="none" text-anchor="middle">2</text><text x="1171.8" y="409" font-size="3" fill="#8fa6e6" stroke="none" text-anchor="middle">10100</text><path d="M1215.2 300.8H1407.4V494.3H1215.2" stroke="#9a9a9a"/><path d="M1249 300.8V494.3" stroke="#9a9a9a"/><path d="M1215.2 396.7H1310L1407.4 300.8M1310 396.7L1407.4 494.3" stroke="#9a9a9a"/><path d="M1223.4 308.2H1398.5" stroke="#9a9a9a" stroke-dasharray="20.4 4.2 3.8 4.2 16.4 4.2 3.8 4.2 16.4 4.2 3.8 4.2 16.4 4.2 3.8 4.2 16.4 4.2 3.8 4.2 16.4 4.2 3.8 4.2"/><path d="M1398.5 308.2H1420" stroke="#9a9a9a"/><path d="M1398.5 272.7V292M1398.5 496V517.3" stroke="#9a9a9a"/><path d="M1398.5 292V496" stroke="#9a9a9a" stroke-dasharray="16.4 4.2 3.8 4.2"/><circle cx="1398.5" cy="267.2" r="5.5" stroke="#9a9a9a" fill="#fff"/><circle cx="1398.5" cy="522.8" r="5.5" stroke="#9a9a9a" fill="#fff"/><text x="1398.5" y="269.6" font-size="6.5" fill="#9c9c9c" stroke="none" text-anchor="middle">A</text><text x="1398.5" y="525.2" font-size="6.5" fill="#9c9c9c" stroke="none" text-anchor="middle">A</text><circle cx="1425.4" cy="308.2" r="5.5" stroke="#9a9a9a" fill="#fff"/><text x="1425.4" y="310.4" font-size="6" fill="#9c9c9c" stroke="none" text-anchor="middle">1</text><path d="M1339.6 289.5V296" stroke="#9a9a9a"/><path d="M1339.4 270.6L1349.2 280.2L1339.4 289.8Z" fill="#a9bdf2" stroke="none"/><circle cx="1339.2" cy="280.2" r="6" stroke="#8fa6e6" fill="#fff"/><path d="M1333.2 280.2H1345.2" stroke="#8fa6e6" stroke-width="0.7"/><text x="1339.2" y="278.6" font-size="3" fill="#8fa6e6" stroke="none" text-anchor="middle">1</text><text x="1339.2" y="284" font-size="3" fill="#8fa6e6" stroke="none" text-anchor="middle">10100</text><path d="M1436.0 386.6L1443.6 380.8L1443.6 392.40000000000003Z" fill="#8c8c8c" stroke="none"/><text x="1431.6" y="387.8" font-size="3" fill="#aaa" stroke="none">x</text><circle cx="1448.6" cy="386.6" r="8" stroke="#9c9c9c" fill="#fff"/><text x="1448.6" y="387.8" font-size="3.4" fill="#999" stroke="none" text-anchor="middle">10100</text><path d="M1410 404H1421" stroke="#9a9a9a"/><path d="M1430.7 394.6L1440.7 404.6H1420.7Z" fill="#a9bdf2" stroke="none"/><circle cx="1430.7" cy="405.6" r="5.6" stroke="#8fa6e6" fill="#fff"/><path d="M1425.3 405.6H1436.1000000000001" stroke="#8fa6e6" stroke-width="0.7"/><text x="1430.7" y="404.6" font-size="3" fill="#8fa6e6" stroke="none" text-anchor="middle">2</text><text x="1430.7" y="409" font-size="3" fill="#8fa6e6" stroke="none" text-anchor="middle">10100</text><path d="M1206.5 403.5H1222.5" stroke="#9a9a9a"/><rect x="1206" y="402.6" width="2.2" height="2" fill="#999" stroke="none"/><path d="M1340.1 499.5V516" stroke="#9a9a9a"/><rect x="1339.2" y="514.6" width="2" height="2.2" fill="#999" stroke="none"/><circle cx="1217" cy="528.4" r="4.6" stroke="#9a9a9a" fill="#fff"/><text x="1217" y="530.4" font-size="4.6" fill="#9c9c9c" stroke="none" text-anchor="middle">3</text><text x="1223.2" y="530.6" font-size="7.1" fill="#a4a4a4" stroke="none" textLength="75" lengthAdjust="spacingAndGlyphs">Existing GA - Roof Plan</text><text x="1224" y="537.8" font-size="4.2" fill="#aaa" stroke="none">1 : 50</text><path d="M1315.4 534.6L1309.6000000000001 542.2L1321.2 542.2Z" fill="#8c8c8c" stroke="none"/><text x="1314.6000000000001" y="533.6" font-size="3" fill="#aaa" stroke="none">x</text><circle cx="1315.4" cy="547.2" r="8" stroke="#9c9c9c" fill="#fff"/><text x="1315.4" y="548.4000000000001" font-size="3.4" fill="#999" stroke="none" text-anchor="middle">10100</text><path d="M1456.5 145V150.3H1545.5V145" stroke="#999"/><text x="1456" y="154.6" font-size="4" fill="#aaa" stroke="none">Not To Scale</text><text x="1456" y="179.8" font-size="4.6" fill="#8c8c8c" stroke="none" font-weight="bold">Notes:</text><text x="1456" y="185.6" font-size="3.9" fill="#a8a8a8" stroke="none">Copyright and not to be reproduced without the</text><text x="1456" y="190.03" font-size="3.9" fill="#a8a8a8" stroke="none">consent of Studio 106 accepts responsibility for</text><text x="1456" y="194.45999999999998" font-size="3.9" fill="#a8a8a8" stroke="none">this document only to the commissioning Party and</text><text x="1456" y="198.89" font-size="3.9" fill="#a8a8a8" stroke="none">not to any other. Studio 106 does not accept</text><text x="1456" y="203.32" font-size="3.9" fill="#a8a8a8" stroke="none">liability for accuracy or veracity of survey</text><text x="1456" y="207.75" font-size="3.9" fill="#a8a8a8" stroke="none">information provided by others and horizontal</text><text x="1456" y="212.18" font-size="3.9" fill="#a8a8a8" stroke="none">dimensions and levels provided by Studio 106 and</text><text x="1456" y="216.60999999999999" font-size="3.9" fill="#a8a8a8" stroke="none">based on survey information provided by others</text><text x="1456" y="221.04" font-size="3.9" fill="#a8a8a8" stroke="none">must be verified on site.</text><text x="1456" y="225.47" font-size="3.9" fill="#a8a8a8" stroke="none">DO NOT SCALE. Use figured dimensions only</text><text x="1456" y="238.8" font-size="4.6" fill="#8c8c8c" stroke="none" font-weight="bold">Masonry Construction</text><text x="1456" y="244.6" font-size="3.9" fill="#a8a8a8" stroke="none">Refer to F30 specification (which includes SE</text><text x="1456" y="249.03" font-size="3.9" fill="#a8a8a8" stroke="none">input) together with SE drawings and specifications</text><text x="1456" y="253.45999999999998" font-size="3.9" fill="#a8a8a8" stroke="none">for full details of wall ties, supports, restrains and</text><text x="1456" y="257.89" font-size="3.9" fill="#a8a8a8" stroke="none">similar</text><path d="M1456 675.8H1545" stroke="#8a8a8a" stroke-width="0.9"/><path d="M1456 778.3H1545" stroke="#8a8a8a" stroke-width="0.9"/><path d="M1456 823.6H1545" stroke="#8a8a8a" stroke-width="0.9"/><path d="M1456 867.4H1545" stroke="#8a8a8a" stroke-width="0.9"/><path d="M1456 889.4H1545" stroke="#8a8a8a" stroke-width="0.9"/><path d="M1456 911.4H1545" stroke="#8a8a8a" stroke-width="0.9"/><text x="1456.5" y="752.2" font-size="4.5" fill="#808080" stroke="none" font-weight="bold">Studio 106</text><text x="1457" y="784.6" font-size="4.5" fill="#7c7c7c" stroke="none">Project</text><text x="1534" y="784.6" font-size="4.5" fill="#7c7c7c" stroke="none">0001</text><text x="1457" y="793.2" font-size="6" fill="#aaa" stroke="none" textLength="60" lengthAdjust="spacing">84 Harebeating Lane</text><text x="1457" y="828.6" font-size="4.5" fill="#7c7c7c" stroke="none">Drawing Name</text><text x="1457" y="838" font-size="6" fill="#aaa" stroke="none" textLength="64" lengthAdjust="spacing">Existing GA Plans and</text><text x="1457" y="845.8" font-size="6" fill="#aaa" stroke="none" textLength="30" lengthAdjust="spacing">Elevations</text><text x="1457" y="872.2" font-size="4.5" fill="#7c7c7c" stroke="none">Scale @ A1</text><text x="1491" y="872.2" font-size="4.5" fill="#7c7c7c" stroke="none">Checked</text><text x="1520" y="872.2" font-size="4.5" fill="#7c7c7c" stroke="none">Revision</text><text x="1458" y="881.6" font-size="4.4" fill="#aaa" stroke="none">1 : 50</text><text x="1457" y="895.2" font-size="4.5" fill="#7c7c7c" stroke="none">Drawing Number</text><text x="1457" y="906" font-size="4.6" fill="#aaa" stroke="none" textLength="56" lengthAdjust="spacing">0001-S106-ZZ-A-10100</text><text x="1457" y="675.2" font-size="4.2" fill="#999" stroke="none">Status</text><text x="1513" y="675.2" font-size="4.2" fill="#999" stroke="none">For approval</text><rect x="1455" y="668" width="92" height="4.6" fill="#fff" stroke="none"/><rect x="1628.6" y="149" width="20" height="142" rx="4" fill="#fafafa" stroke="#aaaaaa" stroke-width="1.6"/><circle cx="1640.5" cy="177.5" r="8" stroke="#999" stroke-width="1.4" fill="#fff"/><path d="M1632 205.4H1640" stroke="#aaa"/><rect x="697" y="690" width="19" height="164" fill="#f5f8ff" stroke="none"/><rect x="500.2" y="729" width="196.5" height="130.2" fill="#c9c9c9" stroke="none"/><path d="M500.2 859.2H696.7" stroke="#b4b4b4"/><path d="M500.2 714.4H696.5V859M500.2 719.3H696.5" stroke="#9a9a9a" stroke-width="0.9"/><path d="M538.4 690V729" stroke="#9a9a9a"/><path d="M672.5 690L696.3 714.2" stroke="#9a9a9a"/><rect x="581.4" y="735" width="62.3" height="22.7" fill="#a6a6a6" stroke="none"/><rect x="583.3" y="737" width="10.6" height="17.2" fill="#f1f3f3" stroke="#8c8c8c" stroke-width="0.6"/><path d="M583.3 754.2L588.5999999999999 737L593.9 754.2" stroke="#8c8c8c" stroke-width="0.6"/><rect x="597" y="737" width="29.7" height="17.2" fill="#f1f3f3" stroke="#8c8c8c" stroke-width="0.6"/><path d="M597 754.2L611.85 737L626.7 754.2" stroke="#8c8c8c" stroke-width="0.6"/><rect x="629.6" y="737" width="12.3" height="17.2" fill="#f1f3f3" stroke="#8c8c8c" stroke-width="0.6"/><path d="M629.6 754.2L635.75 737L641.9 754.2" stroke="#8c8c8c" stroke-width="0.6"/><rect x="580.8" y="798.8" width="63.8" height="30" fill="#bdbdbd" stroke="none"/><rect x="583.3" y="800.8" width="12.1" height="24.5" fill="#f1f3f3" stroke="#8c8c8c" stroke-width="0.6"/><path d="M583.3 825.3L589.3499999999999 800.8L595.4 825.3" stroke="#8c8c8c" stroke-width="0.6"/><rect x="599" y="800.8" width="28.6" height="24.5" fill="#f1f3f3" stroke="#8c8c8c" stroke-width="0.6"/><path d="M599 825.3L613.3 800.8L627.6 825.3" stroke="#8c8c8c" stroke-width="0.6"/><rect x="631" y="800.8" width="10.9" height="24.5" fill="#f1f3f3" stroke="#8c8c8c" stroke-width="0.6"/><path d="M631 825.3L636.45 800.8L641.9 825.3" stroke="#8c8c8c" stroke-width="0.6"/><rect x="580.4" y="828.6" width="64.6" height="3" fill="#b2b2b2" stroke="none"/><path d="M537.8 806.6L529.6 838.4V859H538.6Z" fill="#a7a7a7" stroke="none"/><rect x="538.4" y="806" width="2.2" height="53" fill="#d0d0d0" stroke="#a4a4a4" stroke-width="0.5"/><path d="M466 718.5H752.8" stroke="#8e8e8e" stroke-dasharray="6 2.6 1 2.6" stroke-width="0.8" stroke-dashoffset="0.00"/><path d="M466 786.3H752.8" stroke="#8e8e8e" stroke-dasharray="6 2.6 1 2.6" stroke-width="0.8" stroke-dashoffset="0.00"/><path d="M466 854.3H752.8" stroke="#8e8e8e" stroke-dasharray="6 2.6 1 2.6" stroke-width="0.8" stroke-dashoffset="0.00"/><path d="M748 714.5H753L750.5 718.5Z" fill="#8fa6e6" stroke="none"/><text x="747.4" y="717.3" font-size="3.8" fill="#999" stroke="none" text-anchor="end">Level 02</text><text x="747.4" y="721.1" font-size="2.4" fill="#aaa" stroke="none" text-anchor="end">0.000 m</text><path d="M733 718.5H751" stroke="#999" stroke-width="0.6"/><path d="M748 782.3H753L750.5 786.3Z" fill="#8fa6e6" stroke="none"/><text x="747.4" y="785.0999999999999" font-size="3.8" fill="#999" stroke="none" text-anchor="end">Existing GA - First Floor Plan</text><text x="747.4" y="788.9" font-size="2.4" fill="#aaa" stroke="none" text-anchor="end">0.000 m</text><path d="M733 786.3H751" stroke="#999" stroke-width="0.6"/><path d="M748 850.3H753L750.5 854.3Z" fill="#8fa6e6" stroke="none"/><text x="747.4" y="853.0999999999999" font-size="3.8" fill="#999" stroke="none" text-anchor="end">Level 00</text><text x="747.4" y="856.9" font-size="2.4" fill="#aaa" stroke="none" text-anchor="end">0.000 m</text><path d="M733 854.3H751" stroke="#999" stroke-width="0.6"/><circle cx="511.4" cy="889.4" r="4.6" stroke="#9a9a9a" fill="#fff"/><text x="511.4" y="891.2" font-size="4.4" fill="#9c9c9c" stroke="none" text-anchor="middle">5</text><text x="517.2" y="890.9" font-size="7.1" fill="#a4a4a4" stroke="none" textLength="93.4" lengthAdjust="spacingAndGlyphs">Existing GA Elevation - South</text><text x="518.4" y="898.8" font-size="4.2" fill="#aaa" stroke="none">1 : 50</text><rect x="814" y="690" width="14.4" height="164" fill="#f5f8ff" stroke="none"/><rect x="1022.4" y="690" width="12.2" height="164" fill="#f5f8ff" stroke="none"/><rect x="828.4" y="729" width="194" height="130.2" fill="#c9c9c9" stroke="none"/><path d="M828.4 859.2H1022.4" stroke="#b4b4b4"/><path d="M828.4 859V714.4H1022.4V859M828.4 719.3H1022.4" stroke="#9a9a9a" stroke-width="0.9"/><path d="M852 690L828.4 714.4M998.4 690L1022.4 714.4" stroke="#9a9a9a"/><path d="M901.8 757.4H931.0L935.0 760.6H904.8Z" fill="#adadad" stroke="none"/><rect x="900.8" y="733.4" width="30.2" height="24" fill="#c4c4c4" stroke="#8a8a8a" stroke-width="0.8"/><rect x="902.5999999999999" y="735.1999999999999" width="26.599999999999998" height="19.4" fill="#b9bcbc" stroke="#8a8a8a" stroke-width="0.6"/><rect x="915.4" y="742.8" width="13.2" height="11.2" fill="#eef0f0" stroke="none"/><path d="M903 755L915.8 735.4L928.8 755" stroke="#858585" stroke-width="0.6"/><path d="M961.3 757.4H1013.0L1017.0 760.6H964.3Z" fill="#adadad" stroke="none"/><rect x="960.3" y="734.6" width="52.7" height="22.8" fill="#c4c4c4" stroke="#8a8a8a" stroke-width="0.8"/><rect x="962.0999999999999" y="736.4" width="49.1" height="18.200000000000003" fill="#b9bcbc" stroke="#8a8a8a" stroke-width="0.6"/><rect x="975" y="743" width="9.4" height="11" fill="#eef0f0" stroke="none"/><rect x="988.6" y="743" width="22" height="11" fill="#eef0f0" stroke="none"/><path d="M986.4 734.6V757.4" stroke="#8a8a8a" stroke-width="1.4"/><path d="M962.4 755L973.4 736.6L984.4 755M988.4 755L999.6 736.6L1010.8 755" stroke="#858585" stroke-width="0.6"/><path d="M958.4 833.5H987.6999999999999L991.6999999999999 836.7H961.4Z" fill="#adadad" stroke="none"/><rect x="957.4" y="808.6" width="30.3" height="24.9" fill="#c4c4c4" stroke="#8a8a8a" stroke-width="0.8"/><rect x="959.1999999999999" y="810.4" width="26.7" height="20.299999999999997" fill="#b9bcbc" stroke="#8a8a8a" stroke-width="0.6"/><rect x="972" y="818.6" width="12.7" height="11" fill="#eef0f0" stroke="none"/><path d="M959.6 831L972.6 810.8L985.6 831" stroke="#858585" stroke-width="0.6"/><path d="M936 833.5H944.7L948.7 836.7H940Z" fill="#adadad" stroke="none"/><rect x="935" y="808.6" width="9.7" height="24.9" fill="#c4c4c4" stroke="#8a8a8a" stroke-width="0.8"/><rect x="936.8" y="810.6" width="6.1" height="20.4" fill="#b9bcbc" stroke="#8a8a8a" stroke-width="0.6"/><path d="M937.4 830.6L939.9 811L942.4 830.6" stroke="#858585" stroke-width="0.6"/><rect x="843.2" y="804.8" width="21.8" height="50" fill="#c9c9c9" stroke="#9a9a9a" stroke-width="1.4"/><rect x="861.3" y="816.6" width="2.2" height="36" fill="#fff" stroke="none"/><path d="M863.6 806.6L845 829.6L863.6 853" stroke="#7c7c7c" stroke-width="0.7" stroke-dasharray="1.6 1.4"/><path d="M780.5 718.5H1070.5" stroke="#8e8e8e" stroke-dasharray="6 2.6 1 2.6" stroke-width="0.8" stroke-dashoffset="0.00"/><path d="M780.5 786.3H1070.5" stroke="#8e8e8e" stroke-dasharray="6 2.6 1 2.6" stroke-width="0.8" stroke-dashoffset="0.00"/><path d="M780.5 854.3H1070.5" stroke="#8e8e8e" stroke-dasharray="6 2.6 1 2.6" stroke-width="0.8" stroke-dashoffset="0.00"/><path d="M1066 714.5H1071L1068.5 718.5Z" fill="#8fa6e6" stroke="none"/><text x="1065.4" y="717.3" font-size="3.8" fill="#999" stroke="none" text-anchor="end">Level 02</text><text x="1065.4" y="721.1" font-size="2.4" fill="#aaa" stroke="none" text-anchor="end">0.000 m</text><path d="M1051 718.5H1069" stroke="#999" stroke-width="0.6"/><path d="M1066 782.3H1071L1068.5 786.3Z" fill="#8fa6e6" stroke="none"/><text x="1065.4" y="785.0999999999999" font-size="3.8" fill="#999" stroke="none" text-anchor="end">Existing GA - First Floor Plan</text><text x="1065.4" y="788.9" font-size="2.4" fill="#aaa" stroke="none" text-anchor="end">0.000 m</text><path d="M1051 786.3H1069" stroke="#999" stroke-width="0.6"/><path d="M1066 850.3H1071L1068.5 854.3Z" fill="#8fa6e6" stroke="none"/><text x="1065.4" y="853.0999999999999" font-size="3.8" fill="#999" stroke="none" text-anchor="end">Level 00</text><text x="1065.4" y="856.9" font-size="2.4" fill="#aaa" stroke="none" text-anchor="end">0.000 m</text><path d="M1051 854.3H1069" stroke="#999" stroke-width="0.6"/><circle cx="835.1" cy="889.4" r="4.6" stroke="#9a9a9a" fill="#fff"/><text x="835.1" y="891.2" font-size="4.4" fill="#9c9c9c" stroke="none" text-anchor="middle">4</text><text x="841" y="890.9" font-size="7.1" fill="#a4a4a4" stroke="none" textLength="90" lengthAdjust="spacingAndGlyphs">Existing GA Elevation - East</text><text x="842.2" y="898.8" font-size="4.2" fill="#aaa" stroke="none">1 : 50</text><defs><linearGradient id="pg" x1="0" y1="0" x2="0" y2="1"><stop offset="0" stop-color="#ffffff"/><stop offset="0.45" stop-color="#f6f9ff"/><stop offset="1" stop-color="#f1f5ff"/></linearGradient></defs><rect x="1246" y="636" width="89.5" height="218" fill="url(#pg)" stroke="none"/><path d="M1142.3 627.8H1225.5L1312.2 713.8V729.5H1142.3Z" fill="#cdcdcd" stroke="none"/><rect x="1142.3" y="719" width="170" height="10.5" fill="#c6c6c6" stroke="none"/><rect x="1142.3" y="729.3" width="170.1" height="129.8" fill="#a0a0a0" stroke="none"/><path d="M1225.5 627.8L1312.2 713.8" stroke="#a2a2a2" stroke-width="0.8"/><path d="M1142.3 713.8H1312.2M1142.3 718.7H1312.2" stroke="#868686" stroke-width="0.9"/><path d="M1154.1 627.8V729.3" stroke="#7c7c7c" stroke-width="1"/><path d="M1312.3 714V859" stroke="#8c8c8c" stroke-width="0.8"/><rect x="1166.3" y="735" width="54.4" height="22.5" fill="#8c8c8c" stroke="none"/><rect x="1169.2" y="737.2" width="48.6" height="17.6" fill="#c6caca" stroke="#7f7f7f" stroke-width="0.6"/><path d="M1169.6 754.4L1193.5 737.6L1217.4 754.4" stroke="#7f7f7f" stroke-width="0.6"/><rect x="1171.4" y="799.9" width="46.5" height="54.8" fill="#d3d3d3" stroke="#e27474" stroke-width="0.9"/><path d="M1194.6 799.9V854.7" stroke="#e27474" stroke-width="0.9"/><rect x="1169" y="814.6" width="2.2" height="18" fill="#d8d8d8" stroke="#e27474" stroke-width="0.7"/><rect x="1218.2" y="814.6" width="2.2" height="18" fill="#d8d8d8" stroke="#e27474" stroke-width="0.7"/><rect x="1171.4" y="855.6" width="46.5" height="3.2" fill="#cfcfcf" stroke="none"/><rect x="1151.4" y="805.2" width="1.8" height="53.8" fill="#8c8c8c" stroke="#7a7a7a" stroke-width="0.6"/><rect x="1241.9" y="809.8" width="32.4" height="23.8" fill="#a8a8a8" stroke="#848484" stroke-width="0.8"/><rect x="1243.8" y="811.6" width="28.6" height="17.6" fill="#c6caca" stroke="#7f7f7f" stroke-width="0.6"/><path d="M1244.4 828.8L1258.1 812L1271.8 828.8" stroke="#7f7f7f" stroke-width="0.6"/><rect x="1279.7" y="804.2" width="19.4" height="50.4" fill="#c9c9c9" stroke="#868686" stroke-width="1.4"/><path d="M1281.4 806L1297 829.4L1281.4 852.8" stroke="#6f6f6f" stroke-width="0.7" stroke-dasharray="1.6 1.4"/><path d="M1108 623.3H1372" stroke="#8e8e8e" stroke-dasharray="6 2.6 1 2.6" stroke-width="0.8" stroke-dashoffset="0.00"/><path d="M1108 718.2H1142.3" stroke="#8e8e8e" stroke-dasharray="6 2.6 1 2.6" stroke-width="0.8" stroke-dashoffset="0.00"/><path d="M1142.3 718.2H1312.4" stroke="#b9b9b9" stroke-dasharray="6 2.6 1 2.6" stroke-width="0.8" stroke-dashoffset="9.90"/><path d="M1312.4 718.2H1372" stroke="#8e8e8e" stroke-dasharray="6 2.6 1 2.6" stroke-width="0.8" stroke-dashoffset="9.20"/><path d="M1108 786.3H1142.3" stroke="#8e8e8e" stroke-dasharray="6 2.6 1 2.6" stroke-width="0.8" stroke-dashoffset="0.00"/><path d="M1142.3 786.3H1312.4" stroke="#b9b9b9" stroke-dasharray="6 2.6 1 2.6" stroke-width="0.8" stroke-dashoffset="9.90"/><path d="M1312.4 786.3H1372" stroke="#8e8e8e" stroke-dasharray="6 2.6 1 2.6" stroke-width="0.8" stroke-dashoffset="9.20"/><path d="M1108 854.3H1142.3" stroke="#8e8e8e" stroke-dasharray="6 2.6 1 2.6" stroke-width="0.8" stroke-dashoffset="0.00"/><path d="M1142.3 854.3H1312.4" stroke="#b9b9b9" stroke-dasharray="6 2.6 1 2.6" stroke-width="0.8" stroke-dashoffset="9.90"/><path d="M1312.4 854.3H1372" stroke="#8e8e8e" stroke-dasharray="6 2.6 1 2.6" stroke-width="0.8" stroke-dashoffset="9.20"/><path d="M1367.4 619.3H1372.4L1369.9 623.3Z" fill="#8fa6e6" stroke="none"/><text x="1366.8000000000002" y="622.0999999999999" font-size="3.8" fill="#999" stroke="none" text-anchor="end">Existing GA - Roof Plan</text><text x="1366.8000000000002" y="625.9" font-size="2.4" fill="#aaa" stroke="none" text-anchor="end">0.000 m</text><path d="M1352.4 623.3H1370.4" stroke="#999" stroke-width="0.6"/><path d="M1367.4 714.2H1372.4L1369.9 718.2Z" fill="#8fa6e6" stroke="none"/><text x="1366.8000000000002" y="717.0" font-size="3.8" fill="#999" stroke="none" text-anchor="end">Level 02</text><text x="1366.8000000000002" y="720.8000000000001" font-size="2.4" fill="#aaa" stroke="none" text-anchor="end">0.000 m</text><path d="M1352.4 718.2H1370.4" stroke="#999" stroke-width="0.6"/><path d="M1367.4 782.3H1372.4L1369.9 786.3Z" fill="#8fa6e6" stroke="none"/><text x="1366.8000000000002" y="785.0999999999999" font-size="3.8" fill="#999" stroke="none" text-anchor="end">Existing GA - First Floor Plan</text><text x="1366.8000000000002" y="788.9" font-size="2.4" fill="#aaa" stroke="none" text-anchor="end">0.000 m</text><path d="M1352.4 786.3H1370.4" stroke="#999" stroke-width="0.6"/><path d="M1367.4 850.3H1372.4L1369.9 854.3Z" fill="#8fa6e6" stroke="none"/><text x="1366.8000000000002" y="853.0999999999999" font-size="3.8" fill="#999" stroke="none" text-anchor="end">Level 00</text><text x="1366.8000000000002" y="856.9" font-size="2.4" fill="#aaa" stroke="none" text-anchor="end">0.000 m</text><path d="M1352.4 854.3H1370.4" stroke="#999" stroke-width="0.6"/><circle cx="1141.1" cy="889.6" r="4.6" stroke="#9a9a9a" fill="#fff"/><text x="1141.1" y="891.4" font-size="4.4" fill="#9c9c9c" stroke="none" text-anchor="middle">6</text><text x="1147" y="891" font-size="7.1" fill="#a4a4a4" stroke="none" textLength="93" lengthAdjust="spacingAndGlyphs">Existing GA Elevation - North</text><text x="1148.2" y="898.8" font-size="4.2" fill="#aaa" stroke="none">1 : 50</text></svg>
<!-- dialog -->
<div style="left:377px;top:215px;width:715px;height:475px;background:#f0f0f0;box-sizing:border-box;border:1px solid #626262;box-shadow:0 2px 16px 1px rgba(0,0,0,.33),0 0 4px rgba(0,0,0,.16);"></div>
<div style="left:378px;top:216px;width:713px;height:30px;background:#ffffff;"></div>
<svg style="left:1070px;top:224px" width="12" height="12" viewBox="0 0 12 12"><path d="M1 1L11 11M11 1L1 11" stroke="#111" stroke-width="1.1" fill="none"/></svg>
<div style="left:384px;top:273px;width:699px;height:379px;background:#f0f0f0;box-sizing:border-box;border:1px solid #dcdcdc;"></div>
<div style="left:385px;top:274px;width:697px;height:2px;background:#fff;"></div>
<div style="left:385px;top:274px;width:3px;height:377px;background:#fff;"></div>
<div style="left:1081px;top:274px;width:1px;height:377px;background:#fff;"></div>
<div style="left:385px;top:650px;width:697px;height:1.5px;background:#fff;"></div>
<div style="left:386px;top:255px;width:83px;height:18px;background:#f0f0f0;box-sizing:border-box;border:1px solid #d9d9d9;border-bottom:none;"></div>
<div style="left:468px;top:255px;width:73px;height:18px;background:#f0f0f0;box-sizing:border-box;border:1px solid #d9d9d9;border-bottom:none;"></div>
<div style="left:540px;top:253px;width:102px;height:22px;background:#ffffff;box-sizing:border-box;border:1px solid #d9d9d9;border-bottom:none;"></div>
<div style="left:400px;top:286px;width:669px;height:347px;background:#ffffff;"></div>
<div style="left:400px;top:286px;width:669px;height:2px;background:#6e6e6e;"></div>
<div style="left:400px;top:286px;width:2px;height:347px;background:#6e6e6e;"></div>
<div style="left:1068px;top:286px;width:1px;height:347px;background:#fff;"></div>
<div style="left:402px;top:632px;width:667px;height:1px;background:#e6e6e6;"></div>
<div style="left:402px;top:288px;width:666px;height:39px;background:#f0f0f0;"></div>
<div style="left:402px;top:327px;width:666px;height:1px;background:#6e6e6e;"></div>
<div style="left:527px;top:307px;width:323px;height:1px;background:#6e6e6e;"></div>
<div style="left:526px;top:288px;width:1px;height:39px;background:#6e6e6e;"></div>
<div style="left:526px;top:328px;width:1px;height:72px;background:#a0a0a0;"></div>
<div style="left:607px;top:308px;width:1px;height:19px;background:#6e6e6e;"></div>
<div style="left:607px;top:328px;width:1px;height:72px;background:#a0a0a0;"></div>
<div style="left:688px;top:288px;width:1px;height:39px;background:#6e6e6e;"></div>
<div style="left:688px;top:328px;width:1px;height:72px;background:#a0a0a0;"></div>
<div style="left:769px;top:308px;width:1px;height:19px;background:#6e6e6e;"></div>
<div style="left:769px;top:328px;width:1px;height:72px;background:#a0a0a0;"></div>
<div style="left:850px;top:288px;width:1px;height:39px;background:#6e6e6e;"></div>
<div style="left:850px;top:328px;width:1px;height:72px;background:#a0a0a0;"></div>
<div style="left:923px;top:288px;width:1px;height:39px;background:#6e6e6e;"></div>
<div style="left:923px;top:328px;width:1px;height:72px;background:#a0a0a0;"></div>
<div style="left:1048px;top:288px;width:1px;height:39px;background:#6e6e6e;"></div>
<div style="left:1048px;top:328px;width:1px;height:72px;background:#a0a0a0;"></div>
<div style="left:402px;top:345px;width:647px;height:1px;background:#a0a0a0;"></div>
<div style="left:402px;top:363px;width:647px;height:1px;background:#a0a0a0;"></div>
<div style="left:402px;top:381px;width:647px;height:1px;background:#a0a0a0;"></div>
<div style="left:402px;top:399px;width:647px;height:1px;background:#a0a0a0;"></div>
<svg style="left:402px;top:328px" width="648" height="72" viewBox="402 328 648 72"><path d="M529.5 336.5H604.5" stroke="#7c7c7c" stroke-width="1"/><path d="M529.5 354.5H604.5" stroke="#ff0000" stroke-width="1"/><path d="M529.5 372H605" stroke="#000" stroke-width="2.2"/><path d="M529.5 390.5H604.5" stroke="#000080" stroke-width="1"/><path d="M691 336H767" stroke="#000" stroke-width="2"/><path d="M691 354H767" stroke="#ff0000" stroke-width="2"/><path d="M691 372.5H767.5" stroke="#0000ff" stroke-width="3"/><path d="M691 390H767" stroke="#000080" stroke-width="2"/><svg x="608" y="346" width="38.5" height="17" viewBox="0 0 38.5 17"><path d="M-2.6 -1L-21.6 18M4.4 -1L-14.6 18M11.4 -1L-7.6 18M18.4 -1L-0.6 18M25.4 -1L6.4 18M32.4 -1L13.4 18M39.4 -1L20.4 18M46.4 -1L27.4 18M53.4 -1L34.4 18M60.4 -1L41.4 18" stroke="#ff0000" stroke-width="1" fill="none"/></svg><svg x="648.3" y="346" width="39.7" height="17" viewBox="0 0 39.7 17"><path d="M-2.1 -1L-21.1 18M4.9 -1L-14.1 18M11.9 -1L-7.1 18M18.9 -1L-0.1 18M25.9 -1L6.9 18M32.9 -1L13.9 18M39.9 -1L20.9 18M46.9 -1L27.9 18M53.9 -1L34.9 18M60.9 -1L41.9 18" stroke="#ff0000" stroke-width="1" fill="none"/></svg><rect x="646.5" y="346" width="1.8" height="17" fill="#b4b4b4"/><rect x="770" y="328" width="38.5" height="17" fill="#ff0080"/><svg x="810" y="328" width="40" height="17" viewBox="0 0 40 17"><path d="M-1.3 -1L-20.3 18M5.7 -1L-13.3 18M12.7 -1L-6.3 18M19.7 -1L0.7 18M26.7 -1L7.7 18M33.7 -1L14.7 18M40.7 -1L21.7 18M47.7 -1L28.7 18M54.7 -1L35.7 18M61.7 -1L42.7 18" stroke="#ff0080" stroke-width="1" fill="none"/></svg><svg x="770" y="346" width="38.5" height="17" viewBox="0 0 38.5 17"><path d="M-2.6 -1L-21.6 18M4.4 -1L-14.6 18M11.4 -1L-7.6 18M18.4 -1L-0.6 18M25.4 -1L6.4 18M32.4 -1L13.4 18M39.4 -1L20.4 18M46.4 -1L27.4 18M53.4 -1L34.4 18M60.4 -1L41.4 18" stroke="#ff0000" stroke-width="1" fill="none"/></svg><svg x="770" y="364" width="38.5" height="17" viewBox="0 0 38.5 17"><path d="M-2.6 -1L-21.6 18M4.4 -1L-14.6 18M11.4 -1L-7.6 18M18.4 -1L-0.6 18M25.4 -1L6.4 18M32.4 -1L13.4 18M39.4 -1L20.4 18M46.4 -1L27.4 18M53.4 -1L34.4 18M60.4 -1L41.4 18" stroke="#0000ff" stroke-width="1" fill="none"/></svg><svg x="770" y="382" width="38.5" height="17.5" viewBox="0 0 38.5 17.5"><path d="M-2.6 -1L-22.1 18.5M4.4 -1L-15.1 18.5M11.4 -1L-8.1 18.5M18.4 -1L-1.1 18.5M25.4 -1L5.9 18.5M32.4 -1L12.9 18.5M39.4 -1L19.9 18.5M46.4 -1L26.9 18.5M53.4 -1L33.9 18.5M60.4 -1L40.9 18.5" stroke="#000080" stroke-width="1" fill="none"/></svg><rect x="808.4" y="328" width="1.8" height="72" fill="#b0b0b0"/><rect x="880.5" y="331.5" width="10" height="10" fill="#fff" stroke="#333" stroke-width="1"/><rect x="880.5" y="349.5" width="10" height="10" fill="#fff" stroke="#333" stroke-width="1"/><rect x="880.5" y="367.5" width="10" height="10" fill="#fff" stroke="#333" stroke-width="1"/><rect x="880.5" y="385.5" width="10" height="10" fill="#fff" stroke="#333" stroke-width="1"/><path d="M402.5 345V328.5H1048.5V345" fill="none" stroke="#000" stroke-width="1" stroke-dasharray="1 1"/></svg>
<div style="left:768px;top:661px;width:73px;height:21px;background:#e1e1e1;box-sizing:border-box;border:2px solid #0078d7;"></div>
<div style="left:849px;top:661px;width:73px;height:21px;background:#e1e1e1;box-sizing:border-box;border:1px solid #adadad;"></div>
<div style="left:930px;top:661px;width:73px;height:21px;background:#e1e1e1;box-sizing:border-box;border:1px solid #adadad;"></div>
<div style="left:1011px;top:661px;width:73px;height:21px;background:#e1e1e1;box-sizing:border-box;border:1px solid #adadad;"></div>
<svg style="left:1079px;top:678px" width="11" height="11" viewBox="0 0 11 11"><rect x="7" y="1" width="2" height="2" fill="#bcbcbc"/><rect x="4" y="4" width="2" height="2" fill="#bcbcbc"/><rect x="7" y="4" width="2" height="2" fill="#bcbcbc"/><rect x="1" y="7" width="2" height="2" fill="#bcbcbc"/><rect x="4" y="7" width="2" height="2" fill="#bcbcbc"/><rect x="7" y="7" width="2" height="2" fill="#bcbcbc"/></svg>
<svg style="left:170px;top:335px" width="240" height="90" viewBox="170 335 240 90"><path d="M179.2 381.7C184 382.6 188 382.6 192 382.2C205 380.6 218 375.2 229 370.8C238 367.3 245 364.6 254 363.6C266 362.4 282 362.6 296 363C318 363.8 342 366.8 362 368.7C374 369.7 384 370.3 392 370.4" fill="none" stroke="#0000ff" stroke-width="2" stroke-linecap="round" stroke-linejoin="round"/><path d="M373.4 348.8C375.4 349.4 377 350.4 378.6 351.6C383.6 356.8 388.4 362.4 392.6 367.8C392.2 370.6 391.2 373 390.2 375.2C389 378.4 387.8 381.2 386.4 383.6C385.4 385.6 384 386.2 382.8 386.8C379 390.4 375.6 394.4 372.4 398.4C368 403.6 363.8 409 359.6 414C358.6 415 357.4 415.4 356.2 415.6" fill="none" stroke="#0000ff" stroke-width="2" stroke-linecap="round" stroke-linejoin="round"/></svg>
<span class="t" style="right:1602.40px;top:59.00px;font-size:12px;color:#c6c6c6;">nation</span>
<span class="t" style="left:41.00px;top:44.00px;font-size:12px;color:#c6c6c6;transform:scaleX(0.9511);transform-origin:0 0;">Parameters</span>
<span class="t" style="left:52.00px;top:59.00px;font-size:12px;color:#c6c6c6;transform:scaleX(0.9246);transform-origin:0 0;">Service</span>
<span class="t" style="left:129.00px;top:10.00px;font-size:12px;color:#c6c6c6;transform:scaleX(0.9581);transform-origin:0 0;">Project  Parameters</span>
<span class="t" style="left:129.00px;top:34.00px;font-size:12px;color:#c6c6c6;transform:scaleX(0.9358);transform-origin:0 0;">Shared  Parameters</span>
<span class="t" style="left:129.00px;top:58.00px;font-size:12px;color:#c6c6c6;transform:scaleX(0.9527);transform-origin:0 0;">Global  Parameters</span>
<span class="t" style="left:261.80px;top:10.00px;font-size:12px;color:#c6c6c6;transform:scaleX(0.9433);transform-origin:0 0;">Transfer  Project Standards</span>
<span class="t" style="left:261.80px;top:34.00px;font-size:12px;color:#c6c6c6;transform:scaleX(0.9443);transform-origin:0 0;">Purge  Unused</span>
<span class="t" style="left:261.80px;top:58.00px;font-size:12px;color:#c6c6c6;transform:scaleX(0.9641);transform-origin:0 0;">Project  Units</span>
<span class="t" style="left:442.40px;top:10.00px;font-size:12px;color:#c6c6c6;transform:scaleX(0.9695);transform-origin:0 0;">Structural  Settings</span>
<span class="t" style="left:442.40px;top:35.00px;font-size:12px;color:#c6c6c6;transform:scaleX(0.9416);transform-origin:0 0;">MEP  Settings</span>
<span class="t" style="left:442.40px;top:59.00px;font-size:12px;color:#c6c6c6;transform:scaleX(0.9524);transform-origin:0 0;">Panel Schedule  Templates</span>
<span class="t" style="left:237.00px;top:80.00px;font-size:12px;color:#1e1e1e;transform:scaleX(0.9686);transform-origin:0 0;">Settings</span>
<span class="t" style="left:607.30px;top:44.00px;font-size:12px;color:#c6c6c6;transform:scaleX(1.0338);transform-origin:0 0;">Additional</span>
<span class="t" style="left:614.00px;top:59.00px;font-size:12px;color:#c6c6c6;transform:scaleX(0.9686);transform-origin:0 0;">Settings</span>
<span class="t" style="left:701.50px;top:10.00px;font-size:12px;color:#c6c6c6;transform:scaleX(0.9895);transform-origin:0 0;">Location</span>
<span class="t" style="left:701.50px;top:35.00px;font-size:12px;color:#c6c6c6;transform:scaleX(0.9781);transform-origin:0 0;">Coordinates</span>
<span class="t" style="left:701.50px;top:59.00px;font-size:12px;color:#c6c6c6;transform:scaleX(0.9835);transform-origin:0 0;">Position</span>
<span class="t" style="left:685.30px;top:80.00px;font-size:12px;color:#1e1e1e;transform:scaleX(0.9911);transform-origin:0 0;">Project Location</span>
<span class="t" style="left:792.50px;top:44.00px;font-size:12px;color:#c6c6c6;transform:scaleX(0.9315);transform-origin:0 0;">Design</span>
<span class="t" style="left:789.50px;top:59.00px;font-size:12px;color:#c6c6c6;transform:scaleX(0.9913);transform-origin:0 0;">Options</span>
<span class="t" style="left:860.20px;top:10.00px;font-size:12px;color:#c6c6c6;transform:scaleX(0.9760);transform-origin:0 0;">Add to Set</span>
<span class="t" style="left:860.20px;top:34.00px;font-size:12px;color:#c6c6c6;transform:scaleX(0.9778);transform-origin:0 0;">Pick to Edit</span>
<span class="t" style="left:839.60px;top:58.00px;font-size:12px;color:#a6a6a6;transform:scaleX(1.0156);transform-origin:0 0;">Main Model</span>
<span class="t" style="left:845.50px;top:80.00px;font-size:12px;color:#1e1e1e;transform:scaleX(0.9799);transform-origin:0 0;">Design Options</span>
<span class="t" style="left:993.40px;top:44.00px;font-size:12px;color:#c6c6c6;transform:scaleX(0.9270);transform-origin:0 0;">Create</span>
<span class="t" style="left:995.00px;top:59.00px;font-size:12px;color:#c6c6c6;transform:scaleX(0.9776);transform-origin:0 0;">Study</span>
<span class="t" style="left:1041.50px;top:44.00px;font-size:12px;color:#c6c6c6;transform:scaleX(0.9512);transform-origin:0 0;">Explore</span>
<span class="t" style="left:1033.40px;top:59.00px;font-size:12px;color:#c6c6c6;">Outcomes</span>
<span class="t" style="left:993.40px;top:80.00px;font-size:12px;color:#1e1e1e;transform:scaleX(0.9468);transform-origin:0 0;">Generative Design</span>
<span class="t" style="left:1099.30px;top:44.00px;font-size:12px;color:#c6c6c6;transform:scaleX(0.9844);transform-origin:0 0;">Manage</span>
<span class="t" style="left:1107.20px;top:59.00px;font-size:12px;color:#c6c6c6;transform:scaleX(0.9495);transform-origin:0 0;">Links</span>
<span class="t" style="left:1151.20px;top:44.00px;font-size:12px;color:#c6c6c6;transform:scaleX(0.9255);transform-origin:0 0;">Decal</span>
<span class="t" style="left:1151.70px;top:59.00px;font-size:12px;color:#c6c6c6;transform:scaleX(0.8714);transform-origin:0 0;">Types</span>
<span class="t" style="left:1187.30px;top:44.00px;font-size:12px;color:#c6c6c6;transform:scaleX(0.9768);transform-origin:0 0;">Starting</span>
<span class="t" style="left:1195.20px;top:59.00px;font-size:12px;color:#c6c6c6;transform:scaleX(0.9614);transform-origin:0 0;">View</span>
<span class="t" style="left:1122.40px;top:80.00px;font-size:12px;color:#1e1e1e;transform:scaleX(0.9828);transform-origin:0 0;">Manage Project</span>
<span class="t" style="left:1242.40px;top:44.00px;font-size:12px;color:#c6c6c6;transform:scaleX(0.8843);transform-origin:0 0;">Phases</span>
<span class="t" style="left:1239.30px;top:80.00px;font-size:12px;color:#1e1e1e;transform:scaleX(0.9522);transform-origin:0 0;">Phasing</span>
<span class="t" style="left:1315.20px;top:10.00px;font-size:12px;color:#c6c6c6;transform:scaleX(0.8699);transform-origin:0 0;">Save</span>
<span class="t" style="left:1315.20px;top:34.00px;font-size:12px;color:#c6c6c6;transform:scaleX(0.9437);transform-origin:0 0;">Load</span>
<span class="t" style="left:1315.20px;top:58.00px;font-size:12px;color:#c6c6c6;transform:scaleX(0.9426);transform-origin:0 0;">Edit</span>
<span class="t" style="left:1293.50px;top:80.00px;font-size:12px;color:#1e1e1e;transform:scaleX(0.9580);transform-origin:0 0;">Selection</span>
<span class="t" style="left:1377.00px;top:10.00px;font-size:12px;color:#c6c6c6;transform:scaleX(0.9568);transform-origin:0 0;">IDs of  Selection</span>
<span class="t" style="left:1377.00px;top:34.00px;font-size:12px;color:#c6c6c6;transform:scaleX(0.9363);transform-origin:0 0;">Select  by ID</span>
<span class="t" style="left:1377.00px;top:58.00px;font-size:12px;color:#c6c6c6;transform:scaleX(0.9950);transform-origin:0 0;">Warnings</span>
<span class="t" style="left:1390.30px;top:80.00px;font-size:12px;color:#1e1e1e;transform:scaleX(1.0241);transform-origin:0 0;">Inquiry</span>
<span class="t" style="left:1474.30px;top:80.00px;font-size:12px;color:#1e1e1e;transform:scaleX(0.9760);transform-origin:0 0;">Macros</span>
<span class="t" style="left:1530.30px;top:44.00px;font-size:12px;color:#c6c6c6;transform:scaleX(0.9913);transform-origin:0 0;">Dynamo</span>
<span class="t" style="left:1581.30px;top:44.00px;font-size:12px;color:#c6c6c6;transform:scaleX(0.9913);transform-origin:0 0;">Dynamo</span>
<span class="t" style="left:1588.30px;top:59.00px;font-size:12px;color:#c6c6c6;transform:scaleX(0.9260);transform-origin:0 0;">Player</span>
<span class="t" style="left:1524.20px;top:80.00px;font-size:12px;color:#1e1e1e;">Visual Programming</span>
<span class="t" style="left:149.40px;top:130.00px;font-size:12px;color:#989898;transform:scaleX(1.0059);transform-origin:0 0;">00000 - Project Information</span>
<span class="t" style="left:346.70px;top:130.00px;font-size:12px;color:#b4b4b4;font-weight:700;transform:scaleX(0.9745);transform-origin:0 0;">10100 - Existing GA Plans and El...</span>
<span class="t" style="left:590.80px;top:130.00px;font-size:12px;color:#989898;transform:scaleX(0.9204);transform-origin:0 0;">{3D}</span>
<span class="t" style="left:718.20px;top:130.00px;font-size:12px;color:#989898;transform:scaleX(0.9735);transform-origin:0 0;">10000 - Existing Site Location Plan</span>
<span class="t" style="left:951.60px;top:130.00px;font-size:12px;color:#989898;transform:scaleX(0.9613);transform-origin:0 0;">10001 - Existing Site Plan</span>
<span class="t" style="left:-7.60px;top:181.00px;font-size:12px;color:#5a5a5a;transform:scaleX(0.9382);transform-origin:0 0;">MENT</span>
<span class="t" style="right:1615.40px;top:221.00px;font-size:12px;color:#444;clip-path:inset(0 3.4px 0 0);">Plan</span>
<span class="t" style="left:62.50px;top:221.00px;font-size:12px;color:#333;transform:scaleX(0.9415);transform-origin:0 0;">Edit Type</span>
<span class="t" style="right:1608.00px;top:320.00px;font-size:12px;color:#9a9a9a;">Edit...</span>
<span class="t" style="right:1603.20px;top:374.00px;font-size:12px;color:#9a9a9a;">No clip</span>
<span class="t" style="left:-0.50px;top:410.00px;font-size:12px;color:#262626;transform:scaleX(0.8646);transform-origin:0 0;">EMENT - EXISTIN</span>
<span class="t" style="left:-0.50px;top:427.00px;font-size:12px;color:#262626;transform:scaleX(0.9520);transform-origin:0 0;">. - Ground Flo...</span>
<span class="t" style="right:1627.20px;top:445.00px;font-size:12px;color:#9a9a9a;">nt</span>
<span class="t" style="left:-0.50px;top:499.00px;font-size:12px;color:#9a9a9a;transform:scaleX(0.8982);transform-origin:0 0;">. Plans and Ele...</span>
<span class="t" style="left:64.40px;top:558.00px;font-size:12px;color:#a2a2a2;transform:scaleX(1.0123);transform-origin:0 0;">Apply</span>
<span class="t" style="right:1631.40px;top:638.00px;font-size:12px;color:#3a3a3a;">n</span>
<span class="t" style="left:0.00px;top:698.00px;font-size:12px;color:#3a3a3a;transform:scaleX(0.9222);transform-origin:0 0;">ion Plan</span>
<span class="t" style="left:-0.80px;top:738.00px;font-size:12px;color:#3a3a3a;transform:scaleX(0.9335);transform-origin:0 0;">and Elevations</span>
<span class="t" style="left:-1.50px;top:758.00px;font-size:12px;color:#3a3a3a;transform:scaleX(0.8906);transform-origin:0 0;">ns</span>
<span class="t" style="left:1.60px;top:778.00px;font-size:12px;color:#3a3a3a;transform:scaleX(0.9405);transform-origin:0 0;">ns and Elevations</span>
<span class="t" style="left:-3.20px;top:798.00px;font-size:12px;color:#3a3a3a;transform:scaleX(0.9885);transform-origin:0 0;">ctions</span>
<span class="t" style="left:-0.30px;top:818.00px;font-size:12px;color:#3a3a3a;transform:scaleX(0.9425);transform-origin:0 0;">s and Elevations</span>
<span class="t" style="left:0.00px;top:838.00px;font-size:12px;color:#3a3a3a;transform:scaleX(0.8903);transform-origin:0 0;">ions</span>
<span class="t" style="left:-0.30px;top:858.00px;font-size:12px;color:#3a3a3a;transform:scaleX(0.9571);transform-origin:0 0;">opy 1</span>
<span class="t" style="left:-0.30px;top:878.00px;font-size:12px;color:#3a3a3a;transform:scaleX(0.9571);transform-origin:0 0;">opy 1</span>
<span class="t" style="right:1547.00px;top:918.00px;font-size:12px;color:#3a3a3a;">d Label L00</span>
<span class="t" style="left:386.50px;top:225.00px;font-size:12px;color:#000;transform:scaleX(0.9522);transform-origin:0 0;">Phasing</span>
<span class="t" style="left:391.20px;top:259.50px;font-size:11px;color:#000;transform:scaleX(0.9610);transform-origin:0 0;">Project Phases</span>
<span class="t" style="left:474.20px;top:259.50px;font-size:11px;color:#000;transform:scaleX(0.9548);transform-origin:0 0;">Phase Filters</span>
<span class="t" style="left:547.60px;top:257.50px;font-size:11px;color:#000;transform:scaleX(0.9601);transform-origin:0 0;">Graphic Overrides</span>
<span class="t" style="left:431.10px;top:302.00px;font-size:12px;color:#000;transform:scaleX(0.9203);transform-origin:0 0;">Phase Status</span>
<span class="t" style="left:559.20px;top:292.00px;font-size:12px;color:#000;">Projection/Surface</span>
<span class="t" style="left:554.00px;top:312.00px;font-size:12px;color:#000;transform:scaleX(0.9377);transform-origin:0 0;">Lines</span>
<span class="t" style="left:627.50px;top:312.00px;font-size:12px;color:#000;transform:scaleX(0.9485);transform-origin:0 0;">Patterns</span>
<span class="t" style="left:761.20px;top:292.00px;font-size:12px;color:#000;transform:scaleX(1.0114);transform-origin:0 0;">Cut</span>
<span class="t" style="left:716.20px;top:312.00px;font-size:12px;color:#000;transform:scaleX(0.9377);transform-origin:0 0;">Lines</span>
<span class="t" style="left:789.20px;top:312.00px;font-size:12px;color:#000;transform:scaleX(0.9530);transform-origin:0 0;">Patterns</span>
<span class="t" style="left:865.10px;top:302.00px;font-size:12px;color:#000;transform:scaleX(1.0290);transform-origin:0 0;">Halftone</span>
<span class="t" style="left:965.10px;top:302.00px;font-size:12px;color:#000;transform:scaleX(1.0050);transform-origin:0 0;">Material</span>
<span class="t" style="left:407.30px;top:331.00px;font-size:12px;color:#000;transform:scaleX(0.9612);transform-origin:0 0;">Existing</span>
<span class="t" style="left:407.30px;top:349.00px;font-size:12px;color:#000;transform:scaleX(0.9878);transform-origin:0 0;">Demolished</span>
<span class="t" style="left:407.30px;top:367.00px;font-size:12px;color:#000;transform:scaleX(0.9869);transform-origin:0 0;">New</span>
<span class="t" style="left:407.30px;top:385.00px;font-size:12px;color:#000;transform:scaleX(0.9808);transform-origin:0 0;">Temporary</span>
<span class="t" style="left:796.30px;top:666.50px;font-size:11px;color:#000;transform:scaleX(0.9116);transform-origin:0 0;">OK</span>
<span class="t" style="left:868.50px;top:666.50px;font-size:11px;color:#000;transform:scaleX(0.9314);transform-origin:0 0;">Cancel</span>
<span class="t" style="left:952.90px;top:666.50px;font-size:11px;color:#000;transform:scaleX(0.9444);transform-origin:0 0;">Apply</span>
<span class="t" style="left:1036.00px;top:666.50px;font-size:11px;color:#000;transform:scaleX(0.9503);transform-origin:0 0;">Help</span>
</div></body></html>
